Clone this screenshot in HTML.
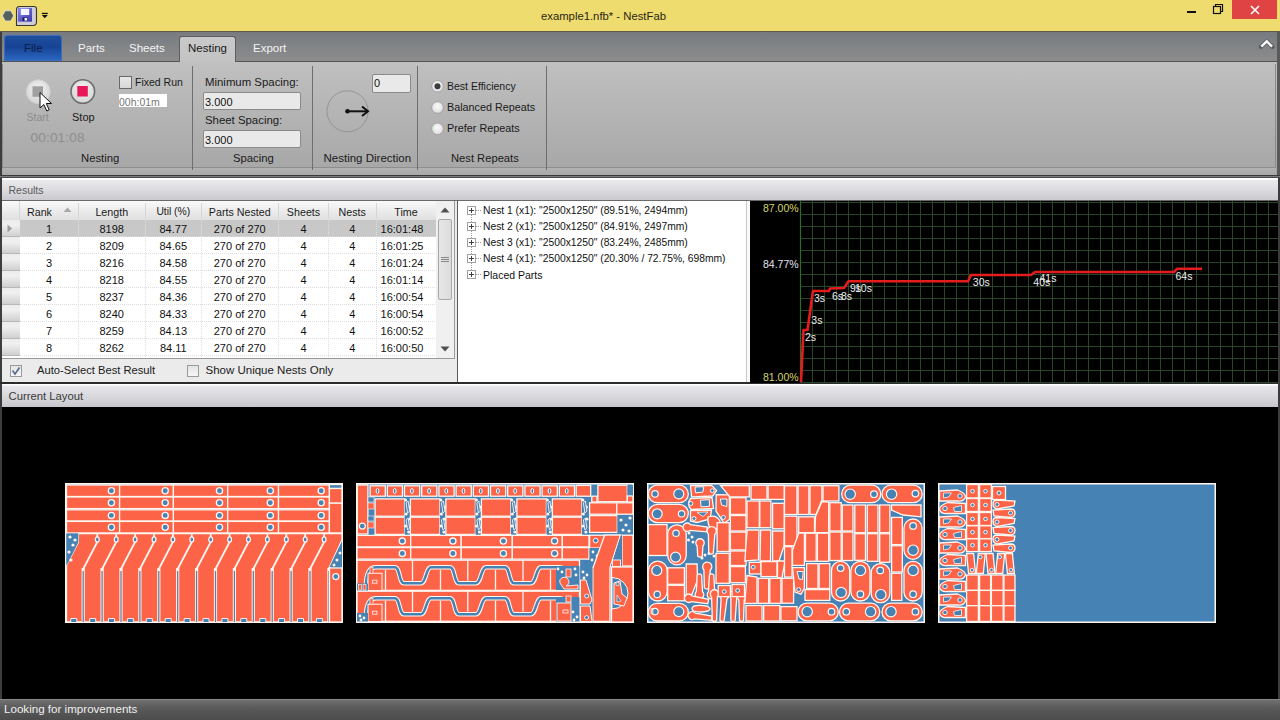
<!DOCTYPE html>
<html><head><meta charset="utf-8">
<style>
*{margin:0;padding:0;box-sizing:border-box}
html,body{width:1280px;height:720px;overflow:hidden;background:#000;font-family:"Liberation Sans",sans-serif;font-size:12px;position:relative}
.a{position:absolute}
.t{position:absolute;white-space:nowrap;line-height:1}
</style></head><body>
<!-- TITLE BAR -->
<div class="a" style="left:0;top:0;width:1280px;height:31px;background:#efdc6e"></div>
<svg class="a" style="left:0;top:0" width="50" height="30" viewBox="0 0 50 30">
  <defs><linearGradient id="fl" x1="0" y1="0" x2="1" y2="1"><stop offset="0" stop-color="#8a86f0"/><stop offset="1" stop-color="#3d3aa8"/></linearGradient></defs>
  <polygon points="2.2,15.8 5.1,10.6 10.9,10.6 13.8,15.8 10.9,21 5.1,21" fill="#56605f" stroke="#ece6c8" stroke-width="1.2" stroke-opacity="0.8"/>
  <path d="M19.5 6.5H34Q36.5 6.5 36.5 9V22Q36.5 25.5 33 25.5H16.5V10Q16.5 6.5 19.5 6.5Z" fill="#cfcdd8" stroke="#3a3630" stroke-width="1.1"/>
  <rect x="18" y="8" width="14" height="13.7" fill="url(#fl)"/>
  <rect x="20.8" y="8.8" width="8.4" height="6.2" fill="#f6f6ff"/>
  <rect x="22.5" y="17.5" width="5" height="3.3" fill="#1a1a50"/>
  <rect x="24.5" y="18" width="2.6" height="2.6" fill="#f0f0ff"/>
  <rect x="41.8" y="12.8" width="6" height="1.3" fill="#111"/>
  <polygon points="41.8,15 47.8,15 44.8,18.2" fill="#111"/>
</svg>
<div class="t" style="left:541px;top:11px;font-size:11.3px;color:#2a2618">example1.nfb* - NestFab</div>
<div class="a" style="left:1187px;top:11px;width:9px;height:2px;background:#111"></div>
<svg class="a" style="left:1212px;top:3px" width="12" height="12" viewBox="0 0 12 12">
  <rect x="1.5" y="3.5" width="7" height="7" fill="none" stroke="#111" stroke-width="1.2"/>
  <path d="M3.5 3V1.5H10.5V8.5H9" fill="none" stroke="#111" stroke-width="1.2"/>
</svg>
<div class="a" style="left:1232px;top:0;width:45px;height:19px;background:#e04343"></div>
<svg class="a" style="left:1250px;top:5px" width="10" height="10" viewBox="0 0 10 10"><path d="M1 1L9 9M9 1L1 9" stroke="#fff" stroke-width="1.6"/></svg>
<div class="a" style="left:0;top:31px;width:1280px;height:1px;background:#5f5a48"></div>

<!-- TAB STRIP -->
<div class="a" style="left:0;top:32px;width:1280px;height:30px;background:linear-gradient(#777b80,#8d8d8d)"></div>
<div class="a" style="left:0;top:32px;width:2px;height:670px;background:#3d3d3d"></div>
<div class="a" style="left:1277px;top:32px;width:3px;height:146px;background:#5a5a5a"></div>
<div class="a" style="left:4px;top:35px;width:58px;height:26px;border-radius:3px 3px 0 0;background:linear-gradient(#1f4f9c,#174395 45%,#2a66bf);border:1px solid #3b6cc0"></div>
<div class="t" style="left:24px;top:43px;font-size:11.5px;color:#0c1e45">File</div>
<div class="t" style="left:78px;top:43px;font-size:11.5px;color:#f4f4f4">Parts</div>
<div class="t" style="left:129px;top:43px;font-size:11.5px;color:#f4f4f4">Sheets</div>
<div class="a" style="left:179px;top:36px;width:57px;height:27px;border-radius:3px 3px 0 0;background:linear-gradient(#c9c9c9,#c3c3c3);border:1px solid #5e5e5e;border-bottom:none"></div>
<div class="t" style="left:188px;top:43px;font-size:11.5px;color:#1a1a1a">Nesting</div>
<div class="t" style="left:253px;top:43px;font-size:11.5px;color:#f4f4f4">Export</div>
<svg class="a" style="left:1259px;top:38px" width="16" height="12" viewBox="0 0 16 12">
  <path d="M2 8.8L7.7 3.2L13.4 8.8" fill="none" stroke="#3a3a3a" stroke-width="4.2" stroke-linejoin="round" stroke-linecap="round" stroke-opacity="0.6"/>
  <path d="M2.3 8.6L7.7 3.4L13.1 8.6" fill="none" stroke="#f4f4f4" stroke-width="2.6" stroke-linejoin="miter"/>
</svg>
<div class="a" style="left:2px;top:61px;width:177px;height:1px;background:#555"></div>
<div class="a" style="left:236px;top:61px;width:1041px;height:1px;background:#555"></div>

<!-- RIBBON BODY -->
<div class="a" style="left:2px;top:62px;width:1275px;height:113px;background:linear-gradient(#c0c0c0,#a6a6a6)"></div>
<div class="a" style="left:3px;top:167px;width:1273px;height:1px;background:#8e8e8e"></div>
<div class="a" style="left:3px;top:168px;width:1273px;height:7px;background:linear-gradient(#b2b2b2,#a8a8a8)"></div>
<div class="a" style="left:2px;top:64px;width:1px;height:104px;background:#8a8a8a"></div>
<div class="a" style="left:1275px;top:64px;width:1px;height:104px;background:#8a8a8a"></div>
<div class="a" style="left:0;top:175px;width:1280px;height:3px;background:linear-gradient(#3a3a3a 0 1px,#7a7a7a 1px 2px,#4a4a4a 2px)"></div>
<div class="a" style="left:192px;top:66px;width:1px;height:104px;background:#6e6e6e"></div>
<div class="a" style="left:312px;top:66px;width:1px;height:104px;background:#6e6e6e"></div>
<div class="a" style="left:417px;top:66px;width:1px;height:104px;background:#6e6e6e"></div>
<div class="a" style="left:546px;top:66px;width:1px;height:104px;background:#6e6e6e"></div>

<svg class="a" style="left:20px;top:74px" width="80" height="40" viewBox="0 0 80 40">
  <defs>
    <radialGradient id="bg1" cx="50%" cy="40%" r="60%"><stop offset="0" stop-color="#f4f4f4"/><stop offset="1" stop-color="#d4d4d4"/></radialGradient>
  </defs>
  <circle cx="18.3" cy="17.7" r="12" fill="url(#bg1)" stroke="#cfcfcf" stroke-width="1"/>
  <rect x="12.5" y="12.3" width="10.5" height="10.5" fill="#a0a0a0"/>
  <circle cx="62.8" cy="17.5" r="11.8" fill="url(#bg1)" stroke="#6e6e6e" stroke-width="1.6"/>
  <rect x="57.3" y="12" width="10.5" height="10.5" fill="#e8175a"/>
  <path d="M20 18.5 L20 34 L23.8 30.5 L26.8 37 L29.2 35.8 L26.3 29.5 L31.5 29.5 Z" fill="#fff" stroke="#111" stroke-width="1"/>
</svg>
<div class="t" style="left:26.5px;top:112px;font-size:10.5px;color:#8c8c8c">Start</div>
<div class="t" style="left:72px;top:112px;font-size:11px;color:#1a1a1a">Stop</div>
<div class="t" style="left:30.5px;top:130.8px;font-size:13.7px;letter-spacing:0.12px;color:#8e8e8e">00:01:08</div>
<div class="a" style="left:119px;top:76px;width:13px;height:13px;border:1px solid #6a6a6a;background:linear-gradient(#e8e8e8,#d6d6d6)"></div>
<div class="t" style="left:135px;top:77px;font-size:10.5px;color:#1a1a1a">Fixed Run</div>
<div class="a" style="left:119px;top:94px;width:48px;height:13px;background:#fff"></div>
<div class="t" style="left:119px;top:97px;font-size:10.5px;color:#777">00h:01m</div>
<div class="t" style="left:81px;top:153px;font-size:11.3px;color:#1a1a1a">Nesting</div>

<div class="t" style="left:205px;top:77px;font-size:11.4px;color:#1a1a1a">Minimum Spacing:</div>
<div class="a" style="left:203px;top:92px;width:98px;height:18px;border:1px solid #8a8a8a;border-radius:2px;background:#e9e9e9"></div>
<div class="t" style="left:205px;top:97px;font-size:11px;color:#111">3.000</div>
<div class="t" style="left:205px;top:115px;font-size:11.4px;color:#1a1a1a">Sheet Spacing:</div>
<div class="a" style="left:203px;top:130px;width:98px;height:18px;border:1px solid #8a8a8a;border-radius:2px;background:#e9e9e9"></div>
<div class="t" style="left:205px;top:135px;font-size:11px;color:#111">3.000</div>
<div class="t" style="left:233px;top:153px;font-size:11.3px;color:#1a1a1a">Spacing</div>

<div class="a" style="left:372px;top:74px;width:39px;height:19px;border:1px solid #8a8a8a;border-radius:2px;background:#e9e9e9"></div>
<div class="t" style="left:374px;top:78px;font-size:11px;color:#111">0</div>
<svg class="a" style="left:325px;top:89px" width="46" height="46" viewBox="0 0 46 46">
  <circle cx="22.5" cy="22.3" r="20.5" fill="none" stroke="#8c8c8c" stroke-width="0.8"/>
  <circle cx="22.5" cy="22.3" r="2.3" fill="#111"/>
  <path d="M22.5 22.3H42" stroke="#111" stroke-width="2"/>
  <path d="M37 17.5L43 22.3L37 27" fill="none" stroke="#111" stroke-width="2"/>
</svg>
<div class="t" style="left:323.5px;top:153px;font-size:11.5px;color:#1a1a1a">Nesting Direction</div>

<svg class="a" style="left:428px;top:77px" width="20" height="60" viewBox="0 0 20 60">
  <defs><radialGradient id="rg" cx="50%" cy="40%" r="60%"><stop offset="0" stop-color="#fafafa"/><stop offset="1" stop-color="#dcdcdc"/></radialGradient></defs>
  <circle cx="9.5" cy="9.3" r="5.8" fill="url(#rg)" stroke="#9a9a9a" stroke-width="0.8"/>
  <circle cx="9.5" cy="9.3" r="3" fill="#3c3c3c"/>
  <circle cx="9.5" cy="30.5" r="5.8" fill="url(#rg)" stroke="#9a9a9a" stroke-width="0.8"/>
  <circle cx="9.5" cy="51.8" r="5.8" fill="url(#rg)" stroke="#9a9a9a" stroke-width="0.8"/>
</svg>
<div class="t" style="left:447px;top:81px;font-size:10.5px;color:#1a1a1a">Best Efficiency</div>
<div class="t" style="left:447px;top:102px;font-size:10.8px;color:#1a1a1a">Balanced Repeats</div>
<div class="t" style="left:447px;top:123px;font-size:10.8px;color:#1a1a1a">Prefer Repeats</div>
<div class="t" style="left:451px;top:153px;font-size:11.2px;color:#1a1a1a">Nest Repeats</div>

<div class="a" style="left:2px;top:178px;width:1277px;height:23px;background:linear-gradient(#fff 0 1px,#eaeaec 1px,#dcdce0 50%,#c9c9cd);border-top:1px solid #fff"></div>
<div class="t" style="left:8.5px;top:185px;font-size:10.5px;color:#5a5a5a">Results</div>
<div class="a" style="left:2px;top:200px;width:1276px;height:1px;background:#6a6a6a"></div>
<div class="a" style="left:2px;top:201px;width:456px;height:181px;background:#ebebeb"></div>
<div class="a" style="left:2px;top:201px;width:453px;height:158px;background:#fff;border-right:1px solid #9a9a9a;border-bottom:1px solid #9a9a9a"></div>
<div class="a" style="left:2px;top:201px;width:434px;height:19px;background:linear-gradient(#fafafa,#ececec 50%,#e0e0e0)"></div>
<div class="a" style="left:77.5px;top:203px;width:1px;height:16px;background:#d6d6d6"></div>
<div class="a" style="left:145.0px;top:203px;width:1px;height:16px;background:#d6d6d6"></div>
<div class="a" style="left:200.5px;top:203px;width:1px;height:16px;background:#d6d6d6"></div>
<div class="a" style="left:278.0px;top:203px;width:1px;height:16px;background:#d6d6d6"></div>
<div class="a" style="left:328.0px;top:203px;width:1px;height:16px;background:#d6d6d6"></div>
<div class="a" style="left:375.5px;top:203px;width:1px;height:16px;background:#d6d6d6"></div>
<div class="a" style="left:19px;top:201px;width:1px;height:19px;background:#d6d6d6"></div>
<div class="t" style="left:27px;top:206.5px;font-size:10.7px;color:#1a1a1a">Rank</div>
<div class="t" style="left:78px;top:206.5px;width:67.5px;text-align:center;font-size:10.7px;color:#1a1a1a">Length</div>
<div class="t" style="left:145.5px;top:206.5px;width:55.5px;text-align:center;font-size:10.3px;color:#1a1a1a">Util (%)</div>
<div class="t" style="left:201px;top:206.5px;width:77.5px;text-align:center;font-size:10.7px;color:#1a1a1a">Parts Nested</div>
<div class="t" style="left:278.5px;top:206.5px;width:50.0px;text-align:center;font-size:10.7px;color:#1a1a1a">Sheets</div>
<div class="t" style="left:328.5px;top:206.5px;width:47.5px;text-align:center;font-size:10.7px;color:#1a1a1a">Nests</div>
<div class="t" style="left:376px;top:206.5px;width:60px;text-align:center;font-size:10.7px;color:#1a1a1a">Time</div>
<svg class="a" style="left:63px;top:207px" width="9" height="6"><polygon points="0.5,5 4.5,0.5 8.5,5" fill="#a8a8a8"/></svg>
<div class="a" style="left:2px;top:220px;width:18px;height:17px;background:linear-gradient(#ececec,#f0f0f0 30%,#d0d0d0);border-bottom:1px solid #b8b8b8"></div>
<div class="a" style="left:20px;top:220px;width:416px;height:17px;background:#c8c8c8"></div>
<svg class="a" style="left:7px;top:224px" width="6" height="9"><polygon points="0.5,0.5 5,4.5 0.5,8.5" fill="#9c9c9c"/></svg>
<div class="a" style="left:20px;top:236px;width:416px;height:1px;background:repeating-linear-gradient(90deg,#dedede 0 1px,transparent 1px 2px)"></div>
<div class="t" style="left:20px;top:224px;width:58px;text-align:center;font-size:11px;color:#111">1</div>
<div class="t" style="left:78px;top:224px;width:67.5px;text-align:center;font-size:11px;color:#111">8198</div>
<div class="t" style="left:145.5px;top:224px;width:55.5px;text-align:center;font-size:11px;color:#111">84.77</div>
<div class="t" style="left:201px;top:224px;width:77.5px;text-align:center;font-size:11px;color:#111">270 of 270</div>
<div class="t" style="left:278.5px;top:224px;width:50.0px;text-align:center;font-size:11px;color:#111">4</div>
<div class="t" style="left:328.5px;top:224px;width:47.5px;text-align:center;font-size:11px;color:#111">4</div>
<div class="t" style="left:376px;top:224px;width:52px;text-align:center;font-size:11px;color:#111">16:01:48</div>
<div class="a" style="left:2px;top:237px;width:18px;height:17px;background:linear-gradient(#ececec,#f0f0f0 30%,#d0d0d0);border-bottom:1px solid #b8b8b8"></div>
<div class="a" style="left:20px;top:253px;width:416px;height:1px;background:repeating-linear-gradient(90deg,#dedede 0 1px,transparent 1px 2px)"></div>
<div class="t" style="left:20px;top:241px;width:58px;text-align:center;font-size:11px;color:#111">2</div>
<div class="t" style="left:78px;top:241px;width:67.5px;text-align:center;font-size:11px;color:#111">8209</div>
<div class="t" style="left:145.5px;top:241px;width:55.5px;text-align:center;font-size:11px;color:#111">84.65</div>
<div class="t" style="left:201px;top:241px;width:77.5px;text-align:center;font-size:11px;color:#111">270 of 270</div>
<div class="t" style="left:278.5px;top:241px;width:50.0px;text-align:center;font-size:11px;color:#111">4</div>
<div class="t" style="left:328.5px;top:241px;width:47.5px;text-align:center;font-size:11px;color:#111">4</div>
<div class="t" style="left:376px;top:241px;width:52px;text-align:center;font-size:11px;color:#111">16:01:25</div>
<div class="a" style="left:2px;top:254px;width:18px;height:17px;background:linear-gradient(#ececec,#f0f0f0 30%,#d0d0d0);border-bottom:1px solid #b8b8b8"></div>
<div class="a" style="left:20px;top:270px;width:416px;height:1px;background:repeating-linear-gradient(90deg,#dedede 0 1px,transparent 1px 2px)"></div>
<div class="t" style="left:20px;top:258px;width:58px;text-align:center;font-size:11px;color:#111">3</div>
<div class="t" style="left:78px;top:258px;width:67.5px;text-align:center;font-size:11px;color:#111">8216</div>
<div class="t" style="left:145.5px;top:258px;width:55.5px;text-align:center;font-size:11px;color:#111">84.58</div>
<div class="t" style="left:201px;top:258px;width:77.5px;text-align:center;font-size:11px;color:#111">270 of 270</div>
<div class="t" style="left:278.5px;top:258px;width:50.0px;text-align:center;font-size:11px;color:#111">4</div>
<div class="t" style="left:328.5px;top:258px;width:47.5px;text-align:center;font-size:11px;color:#111">4</div>
<div class="t" style="left:376px;top:258px;width:52px;text-align:center;font-size:11px;color:#111">16:01:24</div>
<div class="a" style="left:2px;top:271px;width:18px;height:17px;background:linear-gradient(#ececec,#f0f0f0 30%,#d0d0d0);border-bottom:1px solid #b8b8b8"></div>
<div class="a" style="left:20px;top:287px;width:416px;height:1px;background:repeating-linear-gradient(90deg,#dedede 0 1px,transparent 1px 2px)"></div>
<div class="t" style="left:20px;top:275px;width:58px;text-align:center;font-size:11px;color:#111">4</div>
<div class="t" style="left:78px;top:275px;width:67.5px;text-align:center;font-size:11px;color:#111">8218</div>
<div class="t" style="left:145.5px;top:275px;width:55.5px;text-align:center;font-size:11px;color:#111">84.55</div>
<div class="t" style="left:201px;top:275px;width:77.5px;text-align:center;font-size:11px;color:#111">270 of 270</div>
<div class="t" style="left:278.5px;top:275px;width:50.0px;text-align:center;font-size:11px;color:#111">4</div>
<div class="t" style="left:328.5px;top:275px;width:47.5px;text-align:center;font-size:11px;color:#111">4</div>
<div class="t" style="left:376px;top:275px;width:52px;text-align:center;font-size:11px;color:#111">16:01:14</div>
<div class="a" style="left:2px;top:288px;width:18px;height:17px;background:linear-gradient(#ececec,#f0f0f0 30%,#d0d0d0);border-bottom:1px solid #b8b8b8"></div>
<div class="a" style="left:20px;top:304px;width:416px;height:1px;background:repeating-linear-gradient(90deg,#dedede 0 1px,transparent 1px 2px)"></div>
<div class="t" style="left:20px;top:292px;width:58px;text-align:center;font-size:11px;color:#111">5</div>
<div class="t" style="left:78px;top:292px;width:67.5px;text-align:center;font-size:11px;color:#111">8237</div>
<div class="t" style="left:145.5px;top:292px;width:55.5px;text-align:center;font-size:11px;color:#111">84.36</div>
<div class="t" style="left:201px;top:292px;width:77.5px;text-align:center;font-size:11px;color:#111">270 of 270</div>
<div class="t" style="left:278.5px;top:292px;width:50.0px;text-align:center;font-size:11px;color:#111">4</div>
<div class="t" style="left:328.5px;top:292px;width:47.5px;text-align:center;font-size:11px;color:#111">4</div>
<div class="t" style="left:376px;top:292px;width:52px;text-align:center;font-size:11px;color:#111">16:00:54</div>
<div class="a" style="left:2px;top:305px;width:18px;height:17px;background:linear-gradient(#ececec,#f0f0f0 30%,#d0d0d0);border-bottom:1px solid #b8b8b8"></div>
<div class="a" style="left:20px;top:321px;width:416px;height:1px;background:repeating-linear-gradient(90deg,#dedede 0 1px,transparent 1px 2px)"></div>
<div class="t" style="left:20px;top:309px;width:58px;text-align:center;font-size:11px;color:#111">6</div>
<div class="t" style="left:78px;top:309px;width:67.5px;text-align:center;font-size:11px;color:#111">8240</div>
<div class="t" style="left:145.5px;top:309px;width:55.5px;text-align:center;font-size:11px;color:#111">84.33</div>
<div class="t" style="left:201px;top:309px;width:77.5px;text-align:center;font-size:11px;color:#111">270 of 270</div>
<div class="t" style="left:278.5px;top:309px;width:50.0px;text-align:center;font-size:11px;color:#111">4</div>
<div class="t" style="left:328.5px;top:309px;width:47.5px;text-align:center;font-size:11px;color:#111">4</div>
<div class="t" style="left:376px;top:309px;width:52px;text-align:center;font-size:11px;color:#111">16:00:54</div>
<div class="a" style="left:2px;top:322px;width:18px;height:17px;background:linear-gradient(#ececec,#f0f0f0 30%,#d0d0d0);border-bottom:1px solid #b8b8b8"></div>
<div class="a" style="left:20px;top:338px;width:416px;height:1px;background:repeating-linear-gradient(90deg,#dedede 0 1px,transparent 1px 2px)"></div>
<div class="t" style="left:20px;top:326px;width:58px;text-align:center;font-size:11px;color:#111">7</div>
<div class="t" style="left:78px;top:326px;width:67.5px;text-align:center;font-size:11px;color:#111">8259</div>
<div class="t" style="left:145.5px;top:326px;width:55.5px;text-align:center;font-size:11px;color:#111">84.13</div>
<div class="t" style="left:201px;top:326px;width:77.5px;text-align:center;font-size:11px;color:#111">270 of 270</div>
<div class="t" style="left:278.5px;top:326px;width:50.0px;text-align:center;font-size:11px;color:#111">4</div>
<div class="t" style="left:328.5px;top:326px;width:47.5px;text-align:center;font-size:11px;color:#111">4</div>
<div class="t" style="left:376px;top:326px;width:52px;text-align:center;font-size:11px;color:#111">16:00:52</div>
<div class="a" style="left:2px;top:339px;width:18px;height:17px;background:linear-gradient(#ececec,#f0f0f0 30%,#d0d0d0);border-bottom:1px solid #b8b8b8"></div>
<div class="a" style="left:20px;top:355px;width:416px;height:1px;background:repeating-linear-gradient(90deg,#dedede 0 1px,transparent 1px 2px)"></div>
<div class="t" style="left:20px;top:343px;width:58px;text-align:center;font-size:11px;color:#111">8</div>
<div class="t" style="left:78px;top:343px;width:67.5px;text-align:center;font-size:11px;color:#111">8262</div>
<div class="t" style="left:145.5px;top:343px;width:55.5px;text-align:center;font-size:11px;color:#111">84.11</div>
<div class="t" style="left:201px;top:343px;width:77.5px;text-align:center;font-size:11px;color:#111">270 of 270</div>
<div class="t" style="left:278.5px;top:343px;width:50.0px;text-align:center;font-size:11px;color:#111">4</div>
<div class="t" style="left:328.5px;top:343px;width:47.5px;text-align:center;font-size:11px;color:#111">4</div>
<div class="t" style="left:376px;top:343px;width:52px;text-align:center;font-size:11px;color:#111">16:00:50</div>
<div class="a" style="left:77.5px;top:220px;width:1px;height:138px;background:repeating-linear-gradient(#dedede 0 1px,transparent 1px 2px)"></div>
<div class="a" style="left:145.0px;top:220px;width:1px;height:138px;background:repeating-linear-gradient(#dedede 0 1px,transparent 1px 2px)"></div>
<div class="a" style="left:200.5px;top:220px;width:1px;height:138px;background:repeating-linear-gradient(#dedede 0 1px,transparent 1px 2px)"></div>
<div class="a" style="left:278.0px;top:220px;width:1px;height:138px;background:repeating-linear-gradient(#dedede 0 1px,transparent 1px 2px)"></div>
<div class="a" style="left:328.0px;top:220px;width:1px;height:138px;background:repeating-linear-gradient(#dedede 0 1px,transparent 1px 2px)"></div>
<div class="a" style="left:375.5px;top:220px;width:1px;height:138px;background:repeating-linear-gradient(#dedede 0 1px,transparent 1px 2px)"></div>
<div class="a" style="left:436px;top:201px;width:18px;height:157px;background:#f0f0f0"></div>
<svg class="a" style="left:440px;top:207px" width="10" height="6"><polygon points="0.5,5.5 5,0.5 9.5,5.5" fill="#505050"/></svg>
<svg class="a" style="left:440px;top:346px" width="10" height="6"><polygon points="0.5,0.5 5,5.5 9.5,0.5" fill="#505050"/></svg>
<div class="a" style="left:438px;top:219px;width:14px;height:81px;border:1px solid #a8a8a8;border-radius:2px;background:linear-gradient(90deg,#e6e6e6,#dcdcdc)"></div>
<div class="a" style="left:441px;top:257px;width:8px;height:5px;background:repeating-linear-gradient(#888 0 1px,transparent 1px 2px)"></div>
<div class="a" style="left:9.5px;top:364.5px;width:12px;height:12px;border:1px solid #9a9a9a;background:linear-gradient(#e4e4e4,#f6f6f6)"></div>
<svg class="a" style="left:11px;top:366px" width="10" height="10"><path d="M1.5 4.5L4 8L8.5 1.5" fill="none" stroke="#5a6a8a" stroke-width="1.6"/></svg>
<div class="t" style="left:37px;top:365px;font-size:11.2px;color:#1a1a1a">Auto-Select Best Result</div>
<div class="a" style="left:186.5px;top:364.5px;width:12px;height:12px;border:1px solid #9a9a9a;background:linear-gradient(#e4e4e4,#f6f6f6)"></div>
<div class="t" style="left:205.5px;top:365px;font-size:11.5px;color:#1a1a1a">Show Unique Nests Only</div>
<div class="a" style="left:457px;top:201px;width:292px;height:181px;background:#fff;border-left:1px solid #5a5a5a"></div>
<div class="a" style="left:471px;top:215px;width:1px;height:56px;background:repeating-linear-gradient(#a0a0a0 0 1px,transparent 1px 2px)"></div>
<div class="a" style="left:466.5px;top:206.0px;width:9px;height:9px;border:1px solid #a0a0a0;background:#fff"></div>
<div class="a" style="left:468.5px;top:210.0px;width:5px;height:1px;background:#404040"></div>
<div class="a" style="left:470.5px;top:208.0px;width:1px;height:5px;background:#404040"></div>
<div class="a" style="left:476px;top:210.0px;width:5px;height:1px;background:repeating-linear-gradient(90deg,#a0a0a0 0 1px,transparent 1px 2px)"></div>
<div class="t" style="left:483px;top:206.0px;font-size:10.3px;color:#111">Nest 1 (x1): &quot;2500x1250&quot; (89.51%, 2494mm)</div>
<div class="a" style="left:466.5px;top:222.0px;width:9px;height:9px;border:1px solid #a0a0a0;background:#fff"></div>
<div class="a" style="left:468.5px;top:226.0px;width:5px;height:1px;background:#404040"></div>
<div class="a" style="left:470.5px;top:224.0px;width:1px;height:5px;background:#404040"></div>
<div class="a" style="left:476px;top:226.0px;width:5px;height:1px;background:repeating-linear-gradient(90deg,#a0a0a0 0 1px,transparent 1px 2px)"></div>
<div class="t" style="left:483px;top:222.0px;font-size:10.3px;color:#111">Nest 2 (x1): &quot;2500x1250&quot; (84.91%, 2497mm)</div>
<div class="a" style="left:466.5px;top:238.0px;width:9px;height:9px;border:1px solid #a0a0a0;background:#fff"></div>
<div class="a" style="left:468.5px;top:242.0px;width:5px;height:1px;background:#404040"></div>
<div class="a" style="left:470.5px;top:240.0px;width:1px;height:5px;background:#404040"></div>
<div class="a" style="left:476px;top:242.0px;width:5px;height:1px;background:repeating-linear-gradient(90deg,#a0a0a0 0 1px,transparent 1px 2px)"></div>
<div class="t" style="left:483px;top:238.0px;font-size:10.3px;color:#111">Nest 3 (x1): &quot;2500x1250&quot; (83.24%, 2485mm)</div>
<div class="a" style="left:466.5px;top:254.0px;width:9px;height:9px;border:1px solid #a0a0a0;background:#fff"></div>
<div class="a" style="left:468.5px;top:258.0px;width:5px;height:1px;background:#404040"></div>
<div class="a" style="left:470.5px;top:256.0px;width:1px;height:5px;background:#404040"></div>
<div class="a" style="left:476px;top:258.0px;width:5px;height:1px;background:repeating-linear-gradient(90deg,#a0a0a0 0 1px,transparent 1px 2px)"></div>
<div class="t" style="left:483px;top:254.0px;font-size:10.3px;color:#111">Nest 4 (x1): &quot;2500x1250&quot; (20.30% / 72.75%, 698mm)</div>
<div class="a" style="left:466.5px;top:270.0px;width:9px;height:9px;border:1px solid #a0a0a0;background:#fff"></div>
<div class="a" style="left:468.5px;top:274.0px;width:5px;height:1px;background:#404040"></div>
<div class="a" style="left:470.5px;top:272.0px;width:1px;height:5px;background:#404040"></div>
<div class="a" style="left:476px;top:274.0px;width:5px;height:1px;background:repeating-linear-gradient(90deg,#a0a0a0 0 1px,transparent 1px 2px)"></div>
<div class="t" style="left:483px;top:270.0px;font-size:10.5px;color:#111">Placed Parts</div>
<div class="a" style="left:0;top:382px;width:1280px;height:2px;background:#2c2c2c"></div>
<div class="a" style="left:2px;top:384px;width:1276px;height:23px;background:linear-gradient(#fff 0 1px,#e8e8ec 2px,#dadade 50%,#c8c8cc)"></div>
<div class="t" style="left:8.5px;top:390.5px;font-size:11.3px;color:#3a3a3a">Current Layout</div>
<div class="a" style="left:1278px;top:178px;width:2px;height:521px;background:#3c3c3c"></div>
<div class="a" style="left:0;top:699px;width:1280px;height:21px;background:linear-gradient(#707070,#5a5a5a 40%,#4c4c4c);border-top:1px solid #888"></div>
<div class="t" style="left:4px;top:703px;font-size:11.6px;color:#f0f0f0">Looking for improvements</div>
<div class="a" style="left:746px;top:201px;width:1px;height:181px;background:#c8c8c8"></div>
<div class="a" style="left:747px;top:201px;width:3px;height:181px;background:#fafafa"></div>
<svg class="a" style="left:750px;top:201px" width="528" height="182" viewBox="750 201 528 182"><rect x="750" y="201" width="530" height="182" fill="#000"/><path d="M800 202.5H1280 M800 214.5H1280 M800 226.5H1280 M800 238.5H1280 M800 250.5H1280 M800 262.5H1280 M800 274.5H1280 M800 286.5H1280 M800 298.5H1280 M800 310.5H1280 M800 322.5H1280 M800 334.5H1280 M800 346.5H1280 M800 358.5H1280 M800 370.5H1280 M800 382.5H1280 M800.5 201V382 M812.5 201V382 M824.5 201V382 M836.5 201V382 M848.5 201V382 M860.5 201V382 M872.5 201V382 M884.5 201V382 M896.5 201V382 M908.5 201V382 M920.5 201V382 M932.5 201V382 M944.5 201V382 M956.5 201V382 M968.5 201V382 M980.5 201V382 M992.5 201V382 M1004.5 201V382 M1016.5 201V382 M1028.5 201V382 M1040.5 201V382 M1052.5 201V382 M1064.5 201V382 M1076.5 201V382 M1088.5 201V382 M1100.5 201V382 M1112.5 201V382 M1124.5 201V382 M1136.5 201V382 M1148.5 201V382 M1160.5 201V382 M1172.5 201V382 M1184.5 201V382 M1196.5 201V382 M1208.5 201V382 M1220.5 201V382 M1232.5 201V382 M1244.5 201V382 M1256.5 201V382 M1268.5 201V382" stroke="#294529" stroke-width="1" fill="none"/><path d="M800.5 201V382" stroke="#2c6a2c" stroke-width="1.2"/><path d="M801 382 L803.5 330 L807.5 330 L813 291 L829 291 L830 288.5 L844 288 L848.5 281.3 L968 281.3 L971 275 L1031 275 L1035 272 L1174 272 L1177 268.8 L1202 268.8" stroke="#e41c1c" stroke-width="2.6" fill="none" stroke-linejoin="round"/><text x="805" y="340.8" font-family="Liberation Sans" font-size="10.5" fill="#ececec">2s</text><text x="811.3" y="323.7" font-family="Liberation Sans" font-size="10.5" fill="#ececec">3s</text><text x="814" y="301.7" font-family="Liberation Sans" font-size="10.5" fill="#ececec">3s</text><text x="832" y="299.7" font-family="Liberation Sans" font-size="10.5" fill="#ececec">6s</text><text x="841" y="299.5" font-family="Liberation Sans" font-size="10.5" fill="#ececec">8s</text><text x="850" y="292" font-family="Liberation Sans" font-size="10.5" fill="#ececec">9s</text><text x="855" y="292" font-family="Liberation Sans" font-size="10.5" fill="#ececec">10s</text><text x="972.8" y="285.6" font-family="Liberation Sans" font-size="10.5" fill="#ececec">30s</text><text x="1033.3" y="285.6" font-family="Liberation Sans" font-size="10.5" fill="#ececec">40s</text><text x="1039.5" y="282.2" font-family="Liberation Sans" font-size="10.5" fill="#ececec">41s</text><text x="1175.5" y="279.5" font-family="Liberation Sans" font-size="10.5" fill="#ececec">64s</text><text x="798.6" y="212" text-anchor="end" font-family="Liberation Sans" font-size="10.5" fill="#d6d46a">87.00%</text><text x="798.6" y="268" text-anchor="end" font-family="Liberation Sans" font-size="10.5" fill="#e4e4f0">84.77%</text><text x="798.6" y="381" text-anchor="end" font-family="Liberation Sans" font-size="10.5" fill="#d6d46a">81.00%</text></svg>
<svg class="a" style="left:0;top:407px" width="1280" height="292" viewBox="0 407 1280 292"><rect x="65.75" y="483.75" width="276.5" height="138.5" fill="#4682b4" stroke="#fff6f0" stroke-width="1.5"/><rect x="66.5" y="485.0" width="53.1" height="11.5" rx="0" fill="#fd6347" stroke="#fff6f0" stroke-width="1.3"/><circle cx="111.4" cy="490.8" r="3.1" fill="#4682b4" stroke="#fff6f0" stroke-width="1.3"/><rect x="119.6" y="485.0" width="53.8" height="11.5" rx="0" fill="#fd6347" stroke="#fff6f0" stroke-width="1.3"/><circle cx="165.2" cy="490.8" r="3.1" fill="#4682b4" stroke="#fff6f0" stroke-width="1.3"/><rect x="173.4" y="485.0" width="54.3" height="11.5" rx="0" fill="#fd6347" stroke="#fff6f0" stroke-width="1.3"/><circle cx="219.5" cy="490.8" r="3.1" fill="#4682b4" stroke="#fff6f0" stroke-width="1.3"/><rect x="227.7" y="485.0" width="50.8" height="11.5" rx="0" fill="#fd6347" stroke="#fff6f0" stroke-width="1.3"/><circle cx="270.3" cy="490.8" r="3.1" fill="#4682b4" stroke="#fff6f0" stroke-width="1.3"/><rect x="278.5" y="485.0" width="50.9" height="11.5" rx="0" fill="#fd6347" stroke="#fff6f0" stroke-width="1.3"/><circle cx="321.2" cy="490.8" r="3.1" fill="#4682b4" stroke="#fff6f0" stroke-width="1.3"/><rect x="66.5" y="497.0" width="53.1" height="11.6" rx="0" fill="#fd6347" stroke="#fff6f0" stroke-width="1.3"/><circle cx="111.4" cy="502.8" r="3.1" fill="#4682b4" stroke="#fff6f0" stroke-width="1.3"/><rect x="119.6" y="497.0" width="53.8" height="11.6" rx="0" fill="#fd6347" stroke="#fff6f0" stroke-width="1.3"/><circle cx="165.2" cy="502.8" r="3.1" fill="#4682b4" stroke="#fff6f0" stroke-width="1.3"/><rect x="173.4" y="497.0" width="54.3" height="11.6" rx="0" fill="#fd6347" stroke="#fff6f0" stroke-width="1.3"/><circle cx="219.5" cy="502.8" r="3.1" fill="#4682b4" stroke="#fff6f0" stroke-width="1.3"/><rect x="227.7" y="497.0" width="50.8" height="11.6" rx="0" fill="#fd6347" stroke="#fff6f0" stroke-width="1.3"/><circle cx="270.3" cy="502.8" r="3.1" fill="#4682b4" stroke="#fff6f0" stroke-width="1.3"/><rect x="278.5" y="497.0" width="50.9" height="11.6" rx="0" fill="#fd6347" stroke="#fff6f0" stroke-width="1.3"/><circle cx="321.2" cy="502.8" r="3.1" fill="#4682b4" stroke="#fff6f0" stroke-width="1.3"/><rect x="66.5" y="509.8" width="53.1" height="11.2" rx="0" fill="#fd6347" stroke="#fff6f0" stroke-width="1.3"/><circle cx="111.4" cy="515.4" r="3.1" fill="#4682b4" stroke="#fff6f0" stroke-width="1.3"/><rect x="119.6" y="509.8" width="53.8" height="11.2" rx="0" fill="#fd6347" stroke="#fff6f0" stroke-width="1.3"/><circle cx="165.2" cy="515.4" r="3.1" fill="#4682b4" stroke="#fff6f0" stroke-width="1.3"/><rect x="173.4" y="509.8" width="54.3" height="11.2" rx="0" fill="#fd6347" stroke="#fff6f0" stroke-width="1.3"/><circle cx="219.5" cy="515.4" r="3.1" fill="#4682b4" stroke="#fff6f0" stroke-width="1.3"/><rect x="227.7" y="509.8" width="50.8" height="11.2" rx="0" fill="#fd6347" stroke="#fff6f0" stroke-width="1.3"/><circle cx="270.3" cy="515.4" r="3.1" fill="#4682b4" stroke="#fff6f0" stroke-width="1.3"/><rect x="278.5" y="509.8" width="50.9" height="11.2" rx="0" fill="#fd6347" stroke="#fff6f0" stroke-width="1.3"/><circle cx="321.2" cy="515.4" r="3.1" fill="#4682b4" stroke="#fff6f0" stroke-width="1.3"/><rect x="66.5" y="521.4" width="53.1" height="11.6" rx="0" fill="#fd6347" stroke="#fff6f0" stroke-width="1.3"/><circle cx="111.4" cy="527.2" r="3.1" fill="#4682b4" stroke="#fff6f0" stroke-width="1.3"/><rect x="119.6" y="521.4" width="53.8" height="11.6" rx="0" fill="#fd6347" stroke="#fff6f0" stroke-width="1.3"/><circle cx="165.2" cy="527.2" r="3.1" fill="#4682b4" stroke="#fff6f0" stroke-width="1.3"/><rect x="173.4" y="521.4" width="54.3" height="11.6" rx="0" fill="#fd6347" stroke="#fff6f0" stroke-width="1.3"/><circle cx="219.5" cy="527.2" r="3.1" fill="#4682b4" stroke="#fff6f0" stroke-width="1.3"/><rect x="227.7" y="521.4" width="50.8" height="11.6" rx="0" fill="#fd6347" stroke="#fff6f0" stroke-width="1.3"/><circle cx="270.3" cy="527.2" r="3.1" fill="#4682b4" stroke="#fff6f0" stroke-width="1.3"/><rect x="278.5" y="521.4" width="50.9" height="11.6" rx="0" fill="#fd6347" stroke="#fff6f0" stroke-width="1.3"/><circle cx="321.2" cy="527.2" r="3.1" fill="#4682b4" stroke="#fff6f0" stroke-width="1.3"/><rect x="329.4" y="484.5" width="12.6" height="4.0" rx="0" fill="#4682b4" stroke="#fff6f0" stroke-width="1.3"/><rect x="329.4" y="488.5" width="12.6" height="14.7" rx="0" fill="#fd6347" stroke="#fff6f0" stroke-width="1.3"/><rect x="329.4" y="503.2" width="12.6" height="29.8" rx="0" fill="#fd6347" stroke="#fff6f0" stroke-width="1.3"/><polygon points="78.4,533.5 342.0,533.5 342.0,540.0 329.0,569.0 329.0,622.0 66.5,622.0 66.5,565.5 78.4,542.0" fill="#fd6347" stroke="#fff6f0" stroke-width="1.3"/><polygon points="66.5,533.5 78.4,533.5 78.4,542.0 66.5,566.0" fill="#4682b4" stroke="#fff6f0" stroke-width="0"/><circle cx="70.0" cy="537.0" r="1.6" fill="#fff6f0" stroke="#fff6f0" stroke-width="0"/><circle cx="73.0" cy="545.0" r="1.6" fill="#fff6f0" stroke="#fff6f0" stroke-width="0"/><circle cx="69.0" cy="552.0" r="1.6" fill="#fff6f0" stroke="#fff6f0" stroke-width="0"/><circle cx="75.0" cy="540.0" r="1.6" fill="#fff6f0" stroke="#fff6f0" stroke-width="0"/><circle cx="71.0" cy="560.0" r="1.6" fill="#fff6f0" stroke="#fff6f0" stroke-width="0"/><path d="M97.3 533.5V542L83.2 569" fill="none" stroke="#fff6f0" stroke-width="1.8"/><path d="M83.2 568V622" fill="none" stroke="#fff6f0" stroke-width="3.2"/><path d="M83.2 571V622" fill="none" stroke="#647c9c" stroke-width="1.3"/><ellipse cx="97.3" cy="539.5" rx="1.9" ry="2.6" fill="#4682b4" stroke="#fff6f0" stroke-width="1.2"/><path d="M116.2 533.5V542L102.1 569" fill="none" stroke="#fff6f0" stroke-width="1.8"/><path d="M102.1 568V622" fill="none" stroke="#fff6f0" stroke-width="3.2"/><path d="M102.1 571V622" fill="none" stroke="#647c9c" stroke-width="1.3"/><ellipse cx="116.2" cy="539.5" rx="1.9" ry="2.6" fill="#4682b4" stroke="#fff6f0" stroke-width="1.2"/><path d="M135.1 533.5V542L121.0 569" fill="none" stroke="#fff6f0" stroke-width="1.8"/><path d="M121.0 568V622" fill="none" stroke="#fff6f0" stroke-width="3.2"/><path d="M121.0 571V622" fill="none" stroke="#647c9c" stroke-width="1.3"/><ellipse cx="135.1" cy="539.5" rx="1.9" ry="2.6" fill="#4682b4" stroke="#fff6f0" stroke-width="1.2"/><path d="M154.0 533.5V542L139.9 569" fill="none" stroke="#fff6f0" stroke-width="1.8"/><path d="M139.9 568V622" fill="none" stroke="#fff6f0" stroke-width="3.2"/><path d="M139.9 571V622" fill="none" stroke="#647c9c" stroke-width="1.3"/><ellipse cx="154.0" cy="539.5" rx="1.9" ry="2.6" fill="#4682b4" stroke="#fff6f0" stroke-width="1.2"/><path d="M172.9 533.5V542L158.8 569" fill="none" stroke="#fff6f0" stroke-width="1.8"/><path d="M158.8 568V622" fill="none" stroke="#fff6f0" stroke-width="3.2"/><path d="M158.8 571V622" fill="none" stroke="#647c9c" stroke-width="1.3"/><ellipse cx="172.9" cy="539.5" rx="1.9" ry="2.6" fill="#4682b4" stroke="#fff6f0" stroke-width="1.2"/><path d="M191.8 533.5V542L177.7 569" fill="none" stroke="#fff6f0" stroke-width="1.8"/><path d="M177.7 568V622" fill="none" stroke="#fff6f0" stroke-width="3.2"/><path d="M177.7 571V622" fill="none" stroke="#647c9c" stroke-width="1.3"/><ellipse cx="191.8" cy="539.5" rx="1.9" ry="2.6" fill="#4682b4" stroke="#fff6f0" stroke-width="1.2"/><path d="M210.7 533.5V542L196.6 569" fill="none" stroke="#fff6f0" stroke-width="1.8"/><path d="M196.6 568V622" fill="none" stroke="#fff6f0" stroke-width="3.2"/><path d="M196.6 571V622" fill="none" stroke="#647c9c" stroke-width="1.3"/><ellipse cx="210.7" cy="539.5" rx="1.9" ry="2.6" fill="#4682b4" stroke="#fff6f0" stroke-width="1.2"/><path d="M229.6 533.5V542L215.5 569" fill="none" stroke="#fff6f0" stroke-width="1.8"/><path d="M215.5 568V622" fill="none" stroke="#fff6f0" stroke-width="3.2"/><path d="M215.5 571V622" fill="none" stroke="#647c9c" stroke-width="1.3"/><ellipse cx="229.6" cy="539.5" rx="1.9" ry="2.6" fill="#4682b4" stroke="#fff6f0" stroke-width="1.2"/><path d="M248.5 533.5V542L234.4 569" fill="none" stroke="#fff6f0" stroke-width="1.8"/><path d="M234.4 568V622" fill="none" stroke="#fff6f0" stroke-width="3.2"/><path d="M234.4 571V622" fill="none" stroke="#647c9c" stroke-width="1.3"/><ellipse cx="248.5" cy="539.5" rx="1.9" ry="2.6" fill="#4682b4" stroke="#fff6f0" stroke-width="1.2"/><path d="M267.4 533.5V542L253.3 569" fill="none" stroke="#fff6f0" stroke-width="1.8"/><path d="M253.3 568V622" fill="none" stroke="#fff6f0" stroke-width="3.2"/><path d="M253.3 571V622" fill="none" stroke="#647c9c" stroke-width="1.3"/><ellipse cx="267.4" cy="539.5" rx="1.9" ry="2.6" fill="#4682b4" stroke="#fff6f0" stroke-width="1.2"/><path d="M286.3 533.5V542L272.2 569" fill="none" stroke="#fff6f0" stroke-width="1.8"/><path d="M272.2 568V622" fill="none" stroke="#fff6f0" stroke-width="3.2"/><path d="M272.2 571V622" fill="none" stroke="#647c9c" stroke-width="1.3"/><ellipse cx="286.3" cy="539.5" rx="1.9" ry="2.6" fill="#4682b4" stroke="#fff6f0" stroke-width="1.2"/><path d="M305.2 533.5V542L291.1 569" fill="none" stroke="#fff6f0" stroke-width="1.8"/><path d="M291.1 568V622" fill="none" stroke="#fff6f0" stroke-width="3.2"/><path d="M291.1 571V622" fill="none" stroke="#647c9c" stroke-width="1.3"/><ellipse cx="305.2" cy="539.5" rx="1.9" ry="2.6" fill="#4682b4" stroke="#fff6f0" stroke-width="1.2"/><path d="M324.1 533.5V542L310.0 569" fill="none" stroke="#fff6f0" stroke-width="1.8"/><path d="M310.0 568V622" fill="none" stroke="#fff6f0" stroke-width="3.2"/><path d="M310.0 571V622" fill="none" stroke="#647c9c" stroke-width="1.3"/><ellipse cx="324.1" cy="539.5" rx="1.9" ry="2.6" fill="#4682b4" stroke="#fff6f0" stroke-width="1.2"/><path d="M342 541L328.9 569" fill="none" stroke="#fff6f0" stroke-width="1.8"/><path d="M328.9 568V622" fill="none" stroke="#fff6f0" stroke-width="3.2"/><path d="M328.9 571V622" fill="none" stroke="#647c9c" stroke-width="1.3"/><path d="M70.8 622V618.5H76.8V622" fill="#4682b4" stroke="#fff6f0" stroke-width="0.9"/><path d="M89.7 622V618.5H95.7V622" fill="#4682b4" stroke="#fff6f0" stroke-width="0.9"/><path d="M108.5 622V618.5H114.5V622" fill="#4682b4" stroke="#fff6f0" stroke-width="0.9"/><path d="M127.4 622V618.5H133.4V622" fill="#4682b4" stroke="#fff6f0" stroke-width="0.9"/><path d="M146.3 622V618.5H152.3V622" fill="#4682b4" stroke="#fff6f0" stroke-width="0.9"/><path d="M165.2 622V618.5H171.2V622" fill="#4682b4" stroke="#fff6f0" stroke-width="0.9"/><path d="M184.1 622V618.5H190.1V622" fill="#4682b4" stroke="#fff6f0" stroke-width="0.9"/><path d="M203.0 622V618.5H209.0V622" fill="#4682b4" stroke="#fff6f0" stroke-width="0.9"/><path d="M221.9 622V618.5H227.9V622" fill="#4682b4" stroke="#fff6f0" stroke-width="0.9"/><path d="M240.8 622V618.5H246.8V622" fill="#4682b4" stroke="#fff6f0" stroke-width="0.9"/><path d="M259.8 622V618.5H265.8V622" fill="#4682b4" stroke="#fff6f0" stroke-width="0.9"/><path d="M278.6 622V618.5H284.6V622" fill="#4682b4" stroke="#fff6f0" stroke-width="0.9"/><path d="M297.5 622V618.5H303.5V622" fill="#4682b4" stroke="#fff6f0" stroke-width="0.9"/><path d="M316.4 622V618.5H322.4V622" fill="#4682b4" stroke="#fff6f0" stroke-width="0.9"/><polygon points="342.0,541.0 329.5,567.0 342.0,567.0" fill="#4682b4" stroke="#fff6f0" stroke-width="0"/><circle cx="337.0" cy="560.0" r="1.5" fill="#fff6f0" stroke="#fff6f0" stroke-width="0"/><circle cx="340.0" cy="553.0" r="1.5" fill="#fff6f0" stroke="#fff6f0" stroke-width="0"/><circle cx="334.0" cy="565.0" r="1.5" fill="#fff6f0" stroke="#fff6f0" stroke-width="0"/><rect x="329.5" y="568.0" width="12.5" height="54.0" rx="0" fill="#fd6347" stroke="#fff6f0" stroke-width="1.3"/><circle cx="335.8" cy="576.6" r="3" fill="#4682b4" stroke="#fff6f0" stroke-width="1.2"/><rect x="356.75" y="483.75" width="276.5" height="138.5" fill="#4682b4" stroke="#fff6f0" stroke-width="1.5"/><rect x="357.3" y="485.0" width="10.6" height="49.0" rx="0" fill="#fd6347" stroke="#fff6f0" stroke-width="1.3"/><circle cx="362.3" cy="526.1" r="3" fill="#4682b4" stroke="#fff6f0" stroke-width="1.2"/><rect x="370.1" y="485.8" width="15.2" height="10.4" rx="0" fill="#fd6347" stroke="#fff6f0" stroke-width="1.3"/><ellipse cx="377.5" cy="491" rx="1.4" ry="2.6" fill="#4682b4" stroke="#fff6f0" stroke-width="1"/><rect x="387.3" y="485.8" width="15.2" height="10.4" rx="0" fill="#fd6347" stroke="#fff6f0" stroke-width="1.3"/><ellipse cx="394.7" cy="491" rx="1.4" ry="2.6" fill="#4682b4" stroke="#fff6f0" stroke-width="1"/><rect x="404.5" y="485.8" width="15.2" height="10.4" rx="0" fill="#fd6347" stroke="#fff6f0" stroke-width="1.3"/><ellipse cx="411.9" cy="491" rx="1.4" ry="2.6" fill="#4682b4" stroke="#fff6f0" stroke-width="1"/><rect x="421.7" y="485.8" width="15.2" height="10.4" rx="0" fill="#fd6347" stroke="#fff6f0" stroke-width="1.3"/><ellipse cx="429.1" cy="491" rx="1.4" ry="2.6" fill="#4682b4" stroke="#fff6f0" stroke-width="1"/><rect x="438.9" y="485.8" width="15.2" height="10.4" rx="0" fill="#fd6347" stroke="#fff6f0" stroke-width="1.3"/><ellipse cx="446.3" cy="491" rx="1.4" ry="2.6" fill="#4682b4" stroke="#fff6f0" stroke-width="1"/><rect x="456.1" y="485.8" width="15.2" height="10.4" rx="0" fill="#fd6347" stroke="#fff6f0" stroke-width="1.3"/><ellipse cx="463.5" cy="491" rx="1.4" ry="2.6" fill="#4682b4" stroke="#fff6f0" stroke-width="1"/><rect x="473.3" y="485.8" width="15.2" height="10.4" rx="0" fill="#fd6347" stroke="#fff6f0" stroke-width="1.3"/><ellipse cx="480.7" cy="491" rx="1.4" ry="2.6" fill="#4682b4" stroke="#fff6f0" stroke-width="1"/><rect x="490.5" y="485.8" width="15.2" height="10.4" rx="0" fill="#fd6347" stroke="#fff6f0" stroke-width="1.3"/><ellipse cx="497.9" cy="491" rx="1.4" ry="2.6" fill="#4682b4" stroke="#fff6f0" stroke-width="1"/><rect x="507.7" y="485.8" width="15.2" height="10.4" rx="0" fill="#fd6347" stroke="#fff6f0" stroke-width="1.3"/><ellipse cx="515.1" cy="491" rx="1.4" ry="2.6" fill="#4682b4" stroke="#fff6f0" stroke-width="1"/><rect x="524.9" y="485.8" width="15.2" height="10.4" rx="0" fill="#fd6347" stroke="#fff6f0" stroke-width="1.3"/><ellipse cx="532.3" cy="491" rx="1.4" ry="2.6" fill="#4682b4" stroke="#fff6f0" stroke-width="1"/><rect x="542.1" y="485.8" width="15.2" height="10.4" rx="0" fill="#fd6347" stroke="#fff6f0" stroke-width="1.3"/><ellipse cx="549.5" cy="491" rx="1.4" ry="2.6" fill="#4682b4" stroke="#fff6f0" stroke-width="1"/><rect x="559.3" y="485.8" width="15.2" height="10.4" rx="0" fill="#fd6347" stroke="#fff6f0" stroke-width="1.3"/><ellipse cx="566.7" cy="491" rx="1.4" ry="2.6" fill="#4682b4" stroke="#fff6f0" stroke-width="1"/><rect x="576.2" y="485.4" width="14.5" height="10.8" rx="0" fill="#fd6347" stroke="#fff6f0" stroke-width="1.3"/><rect x="368.0" y="497.0" width="6.0" height="5.0" rx="0" fill="#4682b4" stroke="#fff6f0" stroke-width="0.6"/><rect x="368.0" y="503.0" width="6.0" height="6.0" rx="0" fill="#fd6347" stroke="#fff6f0" stroke-width="0.6"/><rect x="368.0" y="516.0" width="6.0" height="5.0" rx="0" fill="#4682b4" stroke="#fff6f0" stroke-width="0.6"/><rect x="368.0" y="522.0" width="6.0" height="6.0" rx="0" fill="#fd6347" stroke="#fff6f0" stroke-width="0.6"/><rect x="375.1" y="498.9" width="29.5" height="17.3" rx="0" fill="#fd6347" stroke="#fff6f0" stroke-width="1.3"/><rect x="375.1" y="517.2" width="29.5" height="17.2" rx="0" fill="#fd6347" stroke="#fff6f0" stroke-width="1.3"/><rect x="404.6" y="498.9" width="6.0" height="35.5" rx="0" fill="#4682b4" stroke="#fff6f0" stroke-width="0"/><circle cx="405.6" cy="500.0" r="1.5" fill="#fff6f0" stroke="#fff6f0" stroke-width="0"/><circle cx="409.1" cy="507.0" r="1.5" fill="#fff6f0" stroke="#fff6f0" stroke-width="0"/><circle cx="406.1" cy="514.0" r="1.5" fill="#fff6f0" stroke="#fff6f0" stroke-width="0"/><circle cx="409.6" cy="519.0" r="1.5" fill="#fff6f0" stroke="#fff6f0" stroke-width="0"/><circle cx="405.6" cy="526.0" r="1.5" fill="#fff6f0" stroke="#fff6f0" stroke-width="0"/><circle cx="408.6" cy="532.0" r="1.5" fill="#fff6f0" stroke="#fff6f0" stroke-width="0"/><polygon points="406.1,503.0 408.1,501.0 409.6,511.0 407.6,513.0" fill="#4682b4" stroke="#fff6f0" stroke-width="0.9"/><polygon points="406.1,520.0 408.1,518.0 409.6,528.0 407.6,530.0" fill="#4682b4" stroke="#fff6f0" stroke-width="0.9"/><rect x="410.4" y="498.9" width="29.5" height="17.3" rx="0" fill="#fd6347" stroke="#fff6f0" stroke-width="1.3"/><rect x="410.4" y="517.2" width="29.5" height="17.2" rx="0" fill="#fd6347" stroke="#fff6f0" stroke-width="1.3"/><rect x="439.9" y="498.9" width="6.0" height="35.5" rx="0" fill="#4682b4" stroke="#fff6f0" stroke-width="0"/><circle cx="440.9" cy="500.0" r="1.5" fill="#fff6f0" stroke="#fff6f0" stroke-width="0"/><circle cx="444.4" cy="507.0" r="1.5" fill="#fff6f0" stroke="#fff6f0" stroke-width="0"/><circle cx="441.4" cy="514.0" r="1.5" fill="#fff6f0" stroke="#fff6f0" stroke-width="0"/><circle cx="444.9" cy="519.0" r="1.5" fill="#fff6f0" stroke="#fff6f0" stroke-width="0"/><circle cx="440.9" cy="526.0" r="1.5" fill="#fff6f0" stroke="#fff6f0" stroke-width="0"/><circle cx="443.9" cy="532.0" r="1.5" fill="#fff6f0" stroke="#fff6f0" stroke-width="0"/><polygon points="441.4,503.0 443.4,501.0 444.9,511.0 442.9,513.0" fill="#4682b4" stroke="#fff6f0" stroke-width="0.9"/><polygon points="441.4,520.0 443.4,518.0 444.9,528.0 442.9,530.0" fill="#4682b4" stroke="#fff6f0" stroke-width="0.9"/><rect x="445.9" y="498.9" width="29.5" height="17.3" rx="0" fill="#fd6347" stroke="#fff6f0" stroke-width="1.3"/><rect x="445.9" y="517.2" width="29.5" height="17.2" rx="0" fill="#fd6347" stroke="#fff6f0" stroke-width="1.3"/><rect x="475.4" y="498.9" width="6.0" height="35.5" rx="0" fill="#4682b4" stroke="#fff6f0" stroke-width="0"/><circle cx="476.4" cy="500.0" r="1.5" fill="#fff6f0" stroke="#fff6f0" stroke-width="0"/><circle cx="479.9" cy="507.0" r="1.5" fill="#fff6f0" stroke="#fff6f0" stroke-width="0"/><circle cx="476.9" cy="514.0" r="1.5" fill="#fff6f0" stroke="#fff6f0" stroke-width="0"/><circle cx="480.4" cy="519.0" r="1.5" fill="#fff6f0" stroke="#fff6f0" stroke-width="0"/><circle cx="476.4" cy="526.0" r="1.5" fill="#fff6f0" stroke="#fff6f0" stroke-width="0"/><circle cx="479.4" cy="532.0" r="1.5" fill="#fff6f0" stroke="#fff6f0" stroke-width="0"/><polygon points="476.9,503.0 478.9,501.0 480.4,511.0 478.4,513.0" fill="#4682b4" stroke="#fff6f0" stroke-width="0.9"/><polygon points="476.9,520.0 478.9,518.0 480.4,528.0 478.4,530.0" fill="#4682b4" stroke="#fff6f0" stroke-width="0.9"/><rect x="481.4" y="498.9" width="29.5" height="17.3" rx="0" fill="#fd6347" stroke="#fff6f0" stroke-width="1.3"/><rect x="481.4" y="517.2" width="29.5" height="17.2" rx="0" fill="#fd6347" stroke="#fff6f0" stroke-width="1.3"/><rect x="510.9" y="498.9" width="6.0" height="35.5" rx="0" fill="#4682b4" stroke="#fff6f0" stroke-width="0"/><circle cx="511.9" cy="500.0" r="1.5" fill="#fff6f0" stroke="#fff6f0" stroke-width="0"/><circle cx="515.4" cy="507.0" r="1.5" fill="#fff6f0" stroke="#fff6f0" stroke-width="0"/><circle cx="512.4" cy="514.0" r="1.5" fill="#fff6f0" stroke="#fff6f0" stroke-width="0"/><circle cx="515.9" cy="519.0" r="1.5" fill="#fff6f0" stroke="#fff6f0" stroke-width="0"/><circle cx="511.9" cy="526.0" r="1.5" fill="#fff6f0" stroke="#fff6f0" stroke-width="0"/><circle cx="514.9" cy="532.0" r="1.5" fill="#fff6f0" stroke="#fff6f0" stroke-width="0"/><polygon points="512.4,503.0 514.4,501.0 515.9,511.0 513.9,513.0" fill="#4682b4" stroke="#fff6f0" stroke-width="0.9"/><polygon points="512.4,520.0 514.4,518.0 515.9,528.0 513.9,530.0" fill="#4682b4" stroke="#fff6f0" stroke-width="0.9"/><rect x="516.9" y="498.9" width="29.5" height="17.3" rx="0" fill="#fd6347" stroke="#fff6f0" stroke-width="1.3"/><rect x="516.9" y="517.2" width="29.5" height="17.2" rx="0" fill="#fd6347" stroke="#fff6f0" stroke-width="1.3"/><rect x="546.4" y="498.9" width="6.0" height="35.5" rx="0" fill="#4682b4" stroke="#fff6f0" stroke-width="0"/><circle cx="547.4" cy="500.0" r="1.5" fill="#fff6f0" stroke="#fff6f0" stroke-width="0"/><circle cx="550.9" cy="507.0" r="1.5" fill="#fff6f0" stroke="#fff6f0" stroke-width="0"/><circle cx="547.9" cy="514.0" r="1.5" fill="#fff6f0" stroke="#fff6f0" stroke-width="0"/><circle cx="551.4" cy="519.0" r="1.5" fill="#fff6f0" stroke="#fff6f0" stroke-width="0"/><circle cx="547.4" cy="526.0" r="1.5" fill="#fff6f0" stroke="#fff6f0" stroke-width="0"/><circle cx="550.4" cy="532.0" r="1.5" fill="#fff6f0" stroke="#fff6f0" stroke-width="0"/><polygon points="547.9,503.0 549.9,501.0 551.4,511.0 549.4,513.0" fill="#4682b4" stroke="#fff6f0" stroke-width="0.9"/><polygon points="547.9,520.0 549.9,518.0 551.4,528.0 549.4,530.0" fill="#4682b4" stroke="#fff6f0" stroke-width="0.9"/><rect x="552.4" y="498.9" width="29.5" height="17.3" rx="0" fill="#fd6347" stroke="#fff6f0" stroke-width="1.3"/><rect x="552.4" y="517.2" width="29.5" height="17.2" rx="0" fill="#fd6347" stroke="#fff6f0" stroke-width="1.3"/><rect x="581.9" y="498.9" width="6.0" height="35.5" rx="0" fill="#4682b4" stroke="#fff6f0" stroke-width="0"/><circle cx="582.9" cy="500.0" r="1.5" fill="#fff6f0" stroke="#fff6f0" stroke-width="0"/><circle cx="586.4" cy="507.0" r="1.5" fill="#fff6f0" stroke="#fff6f0" stroke-width="0"/><circle cx="583.4" cy="514.0" r="1.5" fill="#fff6f0" stroke="#fff6f0" stroke-width="0"/><circle cx="586.9" cy="519.0" r="1.5" fill="#fff6f0" stroke="#fff6f0" stroke-width="0"/><circle cx="582.9" cy="526.0" r="1.5" fill="#fff6f0" stroke="#fff6f0" stroke-width="0"/><circle cx="585.9" cy="532.0" r="1.5" fill="#fff6f0" stroke="#fff6f0" stroke-width="0"/><polygon points="583.4,503.0 585.4,501.0 586.9,511.0 584.9,513.0" fill="#4682b4" stroke="#fff6f0" stroke-width="0.9"/><polygon points="583.4,520.0 585.4,518.0 586.9,528.0 584.9,530.0" fill="#4682b4" stroke="#fff6f0" stroke-width="0.9"/><rect x="592.0" y="485.4" width="5.5" height="10.6" rx="0" fill="#4682b4" stroke="#fff6f0" stroke-width="0"/><rect x="597.9" y="485.2" width="29.4" height="16.5" rx="0" fill="#fd6347" stroke="#fff6f0" stroke-width="1.3"/><rect x="627.3" y="485.2" width="5.7" height="10.8" rx="0" fill="#4682b4" stroke="#fff6f0" stroke-width="0"/><rect x="591.8" y="496.2" width="5.2" height="5.8" rx="0" fill="#fd6347" stroke="#fff6f0" stroke-width="1.3"/><rect x="627.3" y="496.0" width="5.7" height="6.0" rx="0" fill="#fd6347" stroke="#fff6f0" stroke-width="1.3"/><rect x="589.6" y="502.8" width="27.2" height="11.4" rx="0" fill="#fd6347" stroke="#fff6f0" stroke-width="1.3"/><rect x="616.8" y="502.8" width="16.2" height="11.4" rx="0" fill="#fd6347" stroke="#fff6f0" stroke-width="1.3"/><rect x="589.6" y="515.6" width="27.7" height="16.8" rx="0" fill="#fd6347" stroke="#fff6f0" stroke-width="1.3"/><rect x="617.3" y="515.0" width="15.7" height="20.0" rx="0" fill="#4682b4" stroke="#fff6f0" stroke-width="0"/><circle cx="621.0" cy="520.0" r="1.6" fill="#fff6f0" stroke="#fff6f0" stroke-width="0"/><circle cx="626.0" cy="525.0" r="1.6" fill="#fff6f0" stroke="#fff6f0" stroke-width="0"/><circle cx="630.0" cy="518.0" r="1.6" fill="#fff6f0" stroke="#fff6f0" stroke-width="0"/><circle cx="623.0" cy="530.0" r="1.6" fill="#fff6f0" stroke="#fff6f0" stroke-width="0"/><circle cx="629.0" cy="531.0" r="1.6" fill="#fff6f0" stroke="#fff6f0" stroke-width="0"/><rect x="357.0" y="535.4" width="53.7" height="11.5" rx="0" fill="#fd6347" stroke="#fff6f0" stroke-width="1.3"/><rect x="410.7" y="535.4" width="50.5" height="11.5" rx="0" fill="#fd6347" stroke="#fff6f0" stroke-width="1.3"/><rect x="461.2" y="535.4" width="51.1" height="11.5" rx="0" fill="#fd6347" stroke="#fff6f0" stroke-width="1.3"/><rect x="512.3" y="535.4" width="50.0" height="11.5" rx="0" fill="#fd6347" stroke="#fff6f0" stroke-width="1.3"/><rect x="562.3" y="535.4" width="26.7" height="11.5" rx="0" fill="#fd6347" stroke="#fff6f0" stroke-width="1.3"/><circle cx="402.3" cy="541.1" r="3.1" fill="#4682b4" stroke="#fff6f0" stroke-width="1.3"/><circle cx="452.9" cy="541.1" r="3.1" fill="#4682b4" stroke="#fff6f0" stroke-width="1.3"/><circle cx="503.4" cy="541.1" r="3.1" fill="#4682b4" stroke="#fff6f0" stroke-width="1.3"/><circle cx="554.6" cy="541.1" r="3.1" fill="#4682b4" stroke="#fff6f0" stroke-width="1.3"/><rect x="357.0" y="547.6" width="53.7" height="11.5" rx="0" fill="#fd6347" stroke="#fff6f0" stroke-width="1.3"/><rect x="410.7" y="547.6" width="50.5" height="11.5" rx="0" fill="#fd6347" stroke="#fff6f0" stroke-width="1.3"/><rect x="461.2" y="547.6" width="51.1" height="11.5" rx="0" fill="#fd6347" stroke="#fff6f0" stroke-width="1.3"/><rect x="512.3" y="547.6" width="50.0" height="11.5" rx="0" fill="#fd6347" stroke="#fff6f0" stroke-width="1.3"/><rect x="562.3" y="547.6" width="26.7" height="11.5" rx="0" fill="#fd6347" stroke="#fff6f0" stroke-width="1.3"/><circle cx="402.3" cy="553.4" r="3.1" fill="#4682b4" stroke="#fff6f0" stroke-width="1.3"/><circle cx="452.9" cy="553.4" r="3.1" fill="#4682b4" stroke="#fff6f0" stroke-width="1.3"/><circle cx="503.4" cy="553.4" r="3.1" fill="#4682b4" stroke="#fff6f0" stroke-width="1.3"/><circle cx="554.6" cy="553.4" r="3.1" fill="#4682b4" stroke="#fff6f0" stroke-width="1.3"/><rect x="589.6" y="535.2" width="14.4" height="12.8" rx="0" fill="#fd6347" stroke="#fff6f0" stroke-width="1.3"/><circle cx="595.7" cy="540.6" r="2.4" fill="#4682b4" stroke="#fff6f0" stroke-width="1"/><rect x="589.6" y="548.0" width="14.4" height="20.0" rx="0" fill="#4682b4" stroke="#fff6f0" stroke-width="0"/><circle cx="593.0" cy="552.0" r="1.4" fill="#fff6f0" stroke="#fff6f0" stroke-width="0"/><circle cx="597.0" cy="556.0" r="1.4" fill="#fff6f0" stroke="#fff6f0" stroke-width="0"/><circle cx="592.0" cy="560.0" r="1.4" fill="#fff6f0" stroke="#fff6f0" stroke-width="0"/><circle cx="600.0" cy="562.0" r="1.4" fill="#fff6f0" stroke="#fff6f0" stroke-width="0"/><circle cx="596.0" cy="565.0" r="1.4" fill="#fff6f0" stroke="#fff6f0" stroke-width="0"/><polygon points="604.7,535.0 620.5,535.0 610.0,567.6 610.0,621.5 592.8,621.5 592.8,568.3" fill="#fd6347" stroke="#fff6f0" stroke-width="1.3"/><rect x="622.0" y="535.2" width="11.0" height="30.8" rx="0" fill="#fd6347" stroke="#fff6f0" stroke-width="1.3"/><polygon points="620.8,535.5 622.0,535.5 622.0,566.0 611.0,566.0" fill="#4682b4" stroke="#fff6f0" stroke-width="0"/><rect x="612.5" y="560.0" width="8.0" height="6.5" rx="0" fill="#fd6347" stroke="#fff6f0" stroke-width="0.9"/><rect x="611.5" y="567.0" width="21.5" height="55.0" rx="0" fill="#fd6347" stroke="#fff6f0" stroke-width="1.3"/><path d="M612 577.5 A16 15.75 0 0 1 612 609 Z" fill="#4682b4" stroke="#fff6f0" stroke-width="1"/><polygon points="614.0,583.0 620.0,581.0 622.0,594.0 627.0,598.0 624.0,606.0 614.0,604.0" fill="#fd6347" stroke="#fff6f0" stroke-width="1"/><circle cx="617.5" cy="584.0" r="1.7" fill="#4682b4" stroke="#fff6f0" stroke-width="0.8"/><polygon points="617.0,595.0 621.0,601.0 617.0,602.0" fill="#4682b4" stroke="#fff6f0" stroke-width="0.6"/><rect x="579.8" y="568.0" width="12.7" height="53.5" rx="0" fill="#4682b4" stroke="#fff6f0" stroke-width="0"/><circle cx="583.0" cy="572.0" r="1.4" fill="#fff6f0" stroke="#fff6f0" stroke-width="0"/><circle cx="587.0" cy="575.0" r="1.4" fill="#fff6f0" stroke="#fff6f0" stroke-width="0"/><circle cx="584.0" cy="578.0" r="1.4" fill="#fff6f0" stroke="#fff6f0" stroke-width="0"/><polygon points="580.5,580.0 586.0,580.0 592.0,600.0 590.0,604.0 580.5,604.0" fill="#fd6347" stroke="#fff6f0" stroke-width="1"/><polygon points="580.5,606.0 590.0,606.0 592.0,621.5 580.5,621.5" fill="#fd6347" stroke="#fff6f0" stroke-width="1"/><circle cx="586.6" cy="596.0" r="2" fill="#4682b4" stroke="#fff6f0" stroke-width="0.9"/><circle cx="586.6" cy="617.5" r="2" fill="#4682b4" stroke="#fff6f0" stroke-width="0.9"/><rect x="357.0" y="560.2" width="222.5" height="30.4" rx="0" fill="#fd6347" stroke="#fff6f0" stroke-width="1.3"/><path d="M366 586.2 C366 571.2 370 567.2 376 567.2 L395 567.2 C400 567.2 399 583.2 404 583.2 L421 583.2 C426 583.2 426 567.2 431 567.2 L450 567.2 C455 567.2 454 583.2 459 583.2 L476 583.2 C481 583.2 481 567.2 486 567.2 L505 567.2 C510 567.2 509 583.2 514 583.2 L531 583.2 C536 583.2 536 567.2 541 567.2 L560 567.2 C564 567.2 566 573.2 566 577.2" fill="none" stroke="#fff6f0" stroke-width="4.6" stroke-linejoin="round"/><path d="M366 586.2 C366 571.2 370 567.2 376 567.2 L395 567.2 C400 567.2 399 583.2 404 583.2 L421 583.2 C426 583.2 426 567.2 431 567.2 L450 567.2 C455 567.2 454 583.2 459 583.2 L476 583.2 C481 583.2 481 567.2 486 567.2 L505 567.2 C510 567.2 509 583.2 514 583.2 L531 583.2 C536 583.2 536 567.2 541 567.2 L560 567.2 C564 567.2 566 573.2 566 577.2" fill="none" stroke="#4682b4" stroke-width="2.5" stroke-linejoin="round"/><path d="M412.5 560.2L412.5 580.6" stroke="#fff6f0" stroke-width="1.3"/><path d="M467.8 560.2L467.8 580.6" stroke="#fff6f0" stroke-width="1.3"/><path d="M523.0 560.2L523.0 580.6" stroke="#fff6f0" stroke-width="1.3"/><path d="M385.5 569.8L385.5 590.6" stroke="#fff6f0" stroke-width="1.3"/><path d="M440.5 569.8L440.5 590.6" stroke="#fff6f0" stroke-width="1.3"/><path d="M495.5 569.8L495.5 590.6" stroke="#fff6f0" stroke-width="1.3"/><path d="M550.5 569.8L550.5 590.6" stroke="#fff6f0" stroke-width="1.3"/><path d="M357.0 590.6L579.5 590.6" stroke="#fff6f0" stroke-width="1.5"/><rect x="368.0" y="573.2" width="14.0" height="17.4" rx="0" fill="#fd6347" stroke="#fff6f0" stroke-width="1.0"/><rect x="372.5" y="580.2" width="4.5" height="3.0" rx="0" fill="none" stroke="#fff6f0" stroke-width="0.8"/><rect x="370.0" y="567.2" width="3.0" height="6.0" rx="0" fill="#fd6347" stroke="#fff6f0" stroke-width="0.7"/><rect x="357.0" y="591.2" width="222.5" height="30.3" rx="0" fill="#fd6347" stroke="#fff6f0" stroke-width="1.3"/><path d="M366 617.2 C366 602.2 370 598.2 376 598.2 L395 598.2 C400 598.2 399 614.2 404 614.2 L421 614.2 C426 614.2 426 598.2 431 598.2 L450 598.2 C455 598.2 454 614.2 459 614.2 L476 614.2 C481 614.2 481 598.2 486 598.2 L505 598.2 C510 598.2 509 614.2 514 614.2 L531 614.2 C536 614.2 536 598.2 541 598.2 L560 598.2 C564 598.2 566 604.2 566 608.2" fill="none" stroke="#fff6f0" stroke-width="4.6" stroke-linejoin="round"/><path d="M366 617.2 C366 602.2 370 598.2 376 598.2 L395 598.2 C400 598.2 399 614.2 404 614.2 L421 614.2 C426 614.2 426 598.2 431 598.2 L450 598.2 C455 598.2 454 614.2 459 614.2 L476 614.2 C481 614.2 481 598.2 486 598.2 L505 598.2 C510 598.2 509 614.2 514 614.2 L531 614.2 C536 614.2 536 598.2 541 598.2 L560 598.2 C564 598.2 566 604.2 566 608.2" fill="none" stroke="#4682b4" stroke-width="2.5" stroke-linejoin="round"/><path d="M412.5 591.2L412.5 611.6" stroke="#fff6f0" stroke-width="1.3"/><path d="M467.8 591.2L467.8 611.6" stroke="#fff6f0" stroke-width="1.3"/><path d="M523.0 591.2L523.0 611.6" stroke="#fff6f0" stroke-width="1.3"/><path d="M385.5 600.8L385.5 621.5" stroke="#fff6f0" stroke-width="1.3"/><path d="M440.5 600.8L440.5 621.5" stroke="#fff6f0" stroke-width="1.3"/><path d="M495.5 600.8L495.5 621.5" stroke="#fff6f0" stroke-width="1.3"/><path d="M550.5 600.8L550.5 621.5" stroke="#fff6f0" stroke-width="1.3"/><path d="M357.0 621.5L579.5 621.5" stroke="#fff6f0" stroke-width="1.5"/><rect x="368.0" y="604.2" width="14.0" height="17.3" rx="0" fill="#fd6347" stroke="#fff6f0" stroke-width="1.0"/><rect x="372.5" y="611.2" width="4.5" height="3.0" rx="0" fill="none" stroke="#fff6f0" stroke-width="0.8"/><rect x="370.0" y="598.2" width="3.0" height="6.0" rx="0" fill="#fd6347" stroke="#fff6f0" stroke-width="0.7"/><rect x="357.0" y="583.5" width="11.0" height="7.0" rx="0" fill="#4682b4" stroke="#fff6f0" stroke-width="0"/><rect x="358.5" y="584.5" width="3.0" height="5.5" rx="0" fill="#fd6347" stroke="#fff6f0" stroke-width="0.6"/><rect x="363.0" y="584.5" width="3.0" height="5.5" rx="0" fill="#fd6347" stroke="#fff6f0" stroke-width="0.6"/><rect x="357.0" y="613.0" width="11.0" height="8.5" rx="0" fill="#4682b4" stroke="#fff6f0" stroke-width="0"/><circle cx="360.0" cy="616.0" r="1.4" fill="#fff6f0" stroke="#fff6f0" stroke-width="0"/><circle cx="364.0" cy="618.0" r="1.4" fill="#fff6f0" stroke="#fff6f0" stroke-width="0"/><circle cx="361.0" cy="620.0" r="1.4" fill="#fff6f0" stroke="#fff6f0" stroke-width="0"/><rect x="556.0" y="566.0" width="23.5" height="24.0" rx="0" fill="#4682b4" stroke="#fff6f0" stroke-width="0"/><path d="M560 583 a4.5 4.5 0 1 1 6 3 L578 585 L578 589 L564 589 Z" fill="#fd6347" stroke="#fff6f0" stroke-width="0.9"/><rect x="566.0" y="569.0" width="5.0" height="8.0" rx="0" fill="#fd6347" stroke="#fff6f0" stroke-width="0.8"/><circle cx="558.0" cy="569.0" r="1.4" fill="#fff6f0" stroke="#fff6f0" stroke-width="0"/><circle cx="562.0" cy="572.0" r="1.4" fill="#fff6f0" stroke="#fff6f0" stroke-width="0"/><circle cx="575.0" cy="569.0" r="1.4" fill="#fff6f0" stroke="#fff6f0" stroke-width="0"/><circle cx="576.0" cy="575.0" r="1.4" fill="#fff6f0" stroke="#fff6f0" stroke-width="0"/><rect x="556.0" y="597.0" width="23.5" height="24.5" rx="0" fill="#4682b4" stroke="#fff6f0" stroke-width="0"/><rect x="557.0" y="603.0" width="14.0" height="18.0" rx="0" fill="#fd6347" stroke="#fff6f0" stroke-width="0.9"/><rect x="563.0" y="610.0" width="5.0" height="3.0" rx="0" fill="none" stroke="#fff6f0" stroke-width="0.8"/><rect x="566.0" y="596.0" width="5.0" height="6.0" rx="0" fill="#fd6347" stroke="#fff6f0" stroke-width="0.8"/><circle cx="573.0" cy="612.0" r="1.4" fill="#fff6f0" stroke="#fff6f0" stroke-width="0"/><circle cx="577.0" cy="617.0" r="1.4" fill="#fff6f0" stroke="#fff6f0" stroke-width="0"/><circle cx="574.0" cy="620.0" r="1.4" fill="#fff6f0" stroke="#fff6f0" stroke-width="0"/><rect x="647.75" y="483.75" width="276.5" height="138.5" fill="#4682b4" stroke="#fff6f0" stroke-width="1.5"/><rect x="648.3" y="485.1" width="40.0" height="17.6" rx="8.8" fill="#fd6347" stroke="#fff6f0" stroke-width="1.3"/><circle cx="655.0" cy="493.9" r="3.2" fill="#4682b4" stroke="#fff6f0" stroke-width="1.2"/><circle cx="678.8" cy="493.9" r="5" fill="#4682b4" stroke="#fff6f0" stroke-width="1.2"/><rect x="648.3" y="504.4" width="40.0" height="18.3" rx="9.2" fill="#fd6347" stroke="#fff6f0" stroke-width="1.3"/><circle cx="657.2" cy="513.8" r="5" fill="#4682b4" stroke="#fff6f0" stroke-width="1.2"/><circle cx="681.6" cy="513.8" r="3.2" fill="#4682b4" stroke="#fff6f0" stroke-width="1.2"/><rect x="648.3" y="524.6" width="18.7" height="30.9" rx="0" fill="#fd6347" stroke="#fff6f0" stroke-width="1.3"/><rect x="667.7" y="524.8" width="18.5" height="40.0" rx="9.2" fill="#fd6347" stroke="#fff6f0" stroke-width="1.3"/><circle cx="676.0" cy="533.3" r="3.2" fill="#4682b4" stroke="#fff6f0" stroke-width="1.2"/><circle cx="675.6" cy="557.2" r="5" fill="#4682b4" stroke="#fff6f0" stroke-width="1.2"/><rect x="648.3" y="561.1" width="18.9" height="39.9" rx="9.5" fill="#fd6347" stroke="#fff6f0" stroke-width="1.3"/><circle cx="656.8" cy="570.5" r="5" fill="#4682b4" stroke="#fff6f0" stroke-width="1.2"/><circle cx="657.2" cy="594.4" r="3.2" fill="#4682b4" stroke="#fff6f0" stroke-width="1.2"/><rect x="667.7" y="567.8" width="16.7" height="16.5" rx="0" fill="#fd6347" stroke="#fff6f0" stroke-width="1.3"/><rect x="667.7" y="585.3" width="16.7" height="15.5" rx="0" fill="#fd6347" stroke="#fff6f0" stroke-width="1.3"/><rect x="648.3" y="603.3" width="40.0" height="17.7" rx="8.9" fill="#fd6347" stroke="#fff6f0" stroke-width="1.3"/><circle cx="655.0" cy="611.6" r="3.2" fill="#4682b4" stroke="#fff6f0" stroke-width="1.2"/><circle cx="678.8" cy="611.6" r="5" fill="#4682b4" stroke="#fff6f0" stroke-width="1.2"/><rect x="651.0" y="608.5" width="2.0" height="5.5" rx="0" fill="none" stroke="#fff6f0" stroke-width="0.6"/><polygon points="690.5,485.5 711.6,485.3 716.6,490.5 712.7,496.0 691.6,496.8" fill="#fd6347" stroke="#fff6f0" stroke-width="1.3"/><polygon points="695.0,487.0 703.8,486.7 702.8,492.2 695.5,492.8" fill="#4682b4" stroke="#fff6f0" stroke-width="1"/><circle cx="712.3" cy="490.6" r="1.9" fill="#4682b4" stroke="#fff6f0" stroke-width="1"/><path d="M690.5 498.5 L712 497.5 L713.5 508.5 L691 509.5 Q686.5 504 690.5 498.5 Z" fill="#fd6347" stroke="#fff6f0" stroke-width="1.3"/><polygon points="700.5,500.2 709.3,499.6 709.5,506.4 701.0,506.8" fill="#4682b4" stroke="#fff6f0" stroke-width="1"/><circle cx="690.8" cy="503.5" r="2" fill="#4682b4" stroke="#fff6f0" stroke-width="1"/><polygon points="716.2,494.6 729.3,494.8 729.5,519.5 724.0,523.0 716.0,511.0" fill="#fd6347" stroke="#fff6f0" stroke-width="1.3"/><polygon points="720.4,499.0 727.0,499.0 726.8,506.6 721.5,505.0" fill="#4682b4" stroke="#fff6f0" stroke-width="1"/><circle cx="723.4" cy="517.4" r="2" fill="#4682b4" stroke="#fff6f0" stroke-width="1"/><polygon points="690.5,510.5 711.6,510.0 710.0,519.0 697.0,522.5 690.5,521.0" fill="#fd6347" stroke="#fff6f0" stroke-width="1.3"/><circle cx="694.0" cy="518.5" r="2" fill="#4682b4" stroke="#fff6f0" stroke-width="1"/><polygon points="697.0,512.3 708.0,512.0 703.0,516.5" fill="#4682b4" stroke="#fff6f0" stroke-width="0.8"/><path d="M689.9 530.4 A4.2 4.2 0 1 1 690.5 524.6 L707.3 527.1 Q707 529.8 706.7 531.9 Z" fill="#fd6347" stroke="#fff6f0" stroke-width="1.3"/><path d="M708 517 Q716 514 720 521 Q721 529 713 530 Q707 527 708 517 Z" fill="#fd6347" stroke="#fff6f0" stroke-width="1.3"/><path d="M708.4 534.4 A4.6 4.6 0 1 1 714.8 534.6 L713.3 553.1 Q711 555.3 708.7 552.9 Z" fill="#fd6347" stroke="#fff6f0" stroke-width="1.3"/><path d="M697.1 546.0 A4.2 4.2 0 1 1 702.9 546.0 L702.3 556.0 Q700 558.3 697.7 556.0 Z" fill="#fd6347" stroke="#fff6f0" stroke-width="1.3"/><rect x="717.1" y="522.7" width="12.2" height="28.8" rx="0" fill="#fd6347" stroke="#fff6f0" stroke-width="1.3"/><circle cx="689.0" cy="533.0" r="1.5" fill="#fff6f0" stroke="#fff6f0" stroke-width="0"/><circle cx="692.0" cy="537.0" r="1.5" fill="#fff6f0" stroke="#fff6f0" stroke-width="0"/><circle cx="688.5" cy="540.0" r="1.5" fill="#fff6f0" stroke="#fff6f0" stroke-width="0"/><circle cx="693.0" cy="542.0" r="1.5" fill="#fff6f0" stroke="#fff6f0" stroke-width="0"/><polygon points="686.2,564.0 697.1,564.0 697.5,580.0 692.0,594.4 686.2,594.4" fill="#fd6347" stroke="#fff6f0" stroke-width="1.3"/><path d="M702.5 591.5 A4.4 4.4 0 1 1 696.3 591.5 L697.2 575.0 Q699.4 572.8 701.6 575.0 Z" fill="#fd6347" stroke="#fff6f0" stroke-width="1.3"/><path d="M703.9 569.9 A4.6 4.6 0 1 1 710.3 570.1 L708.8 588.1 Q706.6 590.2 704.4 587.9 Z" fill="#fd6347" stroke="#fff6f0" stroke-width="1.3"/><path d="M714.7 591.5 A4.4 4.4 0 1 1 708.5 591.5 L709.4 575.0 Q711.6 572.8 713.8 575.0 Z" fill="#fd6347" stroke="#fff6f0" stroke-width="1.3"/><rect x="716.0" y="553.3" width="13.3" height="30.0" rx="0" fill="#fd6347" stroke="#fff6f0" stroke-width="1.3"/><path d="M691.1 601.7 A4.2 4.2 0 1 1 692.1 595.9 L708.6 599.3 Q708.2 601.9 707.8 603.7 Z" fill="#fd6347" stroke="#fff6f0" stroke-width="1.3"/><path d="M694 606 Q700 604.5 708 606.5 Q712 608.8 708 611 Q700 613 694 611 Q690 608.8 694 606 Z" fill="#fd6347" stroke="#fff6f0" stroke-width="1.3"/><path d="M694.6 618.8 A4 4 0 1 1 695.4 613.2 L711.9 616.0 Q711.6 618.5 711.3 620.4 Z" fill="#fd6347" stroke="#fff6f0" stroke-width="1.3"/><path d="M711.6 597.0 A4.2 4.2 0 1 1 717.4 597.0 L716.6 620.5 Q714.5 622.6 712.4 620.5 Z" fill="#fd6347" stroke="#fff6f0" stroke-width="1.3"/><path d="M721.1 598.7 A4.2 4.2 0 1 1 726.9 599.3 L724.1 620.7 Q722 622.6 719.9 620.3 Z" fill="#fd6347" stroke="#fff6f0" stroke-width="1.3"/><path d="M730.9 597.9 A4.2 4.2 0 1 1 736.7 598.1 L735.1 620.6 Q733 622.6 730.9 620.4 Z" fill="#fd6347" stroke="#fff6f0" stroke-width="1.3"/><path d="M738.8 600.0 A3.8 3.8 0 1 1 744.2 600.0 L743.5 620.5 Q741.5 622.5 739.5 620.5 Z" fill="#fd6347" stroke="#fff6f0" stroke-width="1.3"/><rect x="718.2" y="585.5" width="12.2" height="11.1" rx="0" fill="#fd6347" stroke="#fff6f0" stroke-width="1.3"/><circle cx="724.3" cy="591.6" r="1.9" fill="#4682b4" stroke="#fff6f0" stroke-width="1"/><rect x="732.0" y="584.5" width="12.5" height="12.1" rx="0" fill="#fd6347" stroke="#fff6f0" stroke-width="1.3"/><circle cx="737.6" cy="590.5" r="1.9" fill="#4682b4" stroke="#fff6f0" stroke-width="1"/><circle cx="705.0" cy="555.0" r="1.5" fill="#fff6f0" stroke="#fff6f0" stroke-width="0"/><circle cx="709.0" cy="553.5" r="1.5" fill="#fff6f0" stroke="#fff6f0" stroke-width="0"/><circle cx="714.0" cy="556.0" r="1.5" fill="#fff6f0" stroke="#fff6f0" stroke-width="0"/><circle cx="702.0" cy="558.0" r="1.5" fill="#fff6f0" stroke="#fff6f0" stroke-width="0"/><polygon points="720.4,485.5 749.3,485.3 749.3,496.8 730.0,496.8" fill="#fd6347" stroke="#fff6f0" stroke-width="1.3"/><rect x="730.4" y="497.7" width="15.6" height="16.7" rx="0" fill="#fd6347" stroke="#fff6f0" stroke-width="1.3"/><rect x="730.4" y="515.5" width="15.6" height="15.5" rx="0" fill="#fd6347" stroke="#fff6f0" stroke-width="1.3"/><rect x="730.4" y="532.1" width="15.6" height="17.8" rx="0" fill="#fd6347" stroke="#fff6f0" stroke-width="1.3"/><rect x="730.4" y="551.0" width="15.6" height="14.5" rx="0" fill="#fd6347" stroke="#fff6f0" stroke-width="1.3"/><rect x="730.4" y="566.6" width="15.0" height="16.1" rx="0" fill="#fd6347" stroke="#fff6f0" stroke-width="1.3"/><rect x="751.0" y="485.3" width="16.0" height="14.1" rx="0" fill="#fd6347" stroke="#fff6f0" stroke-width="1.3"/><rect x="768.1" y="485.3" width="16.1" height="14.1" rx="0" fill="#fd6347" stroke="#fff6f0" stroke-width="1.3"/><rect x="747.0" y="501.0" width="12.3" height="26.7" rx="0" fill="#fd6347" stroke="#fff6f0" stroke-width="1.3"/><rect x="759.8" y="501.0" width="11.1" height="26.7" rx="0" fill="#fd6347" stroke="#fff6f0" stroke-width="1.3"/><rect x="772.6" y="503.3" width="11.6" height="25.5" rx="0" fill="#fd6347" stroke="#fff6f0" stroke-width="1.3"/><polygon points="747.2,530.0 759.0,530.0 758.5,560.0 744.8,561.0" fill="#fd6347" stroke="#fff6f0" stroke-width="1.3"/><polygon points="760.6,530.0 770.9,530.0 770.5,561.0 760.0,561.0" fill="#fd6347" stroke="#fff6f0" stroke-width="1.3"/><polygon points="772.6,531.0 784.2,531.0 784.0,546.0 779.0,561.0 772.6,561.0" fill="#fd6347" stroke="#fff6f0" stroke-width="1.3"/><rect x="749.3" y="562.3" width="11.7" height="11.7" rx="0" fill="#fd6347" stroke="#fff6f0" stroke-width="1.3"/><circle cx="753.2" cy="567.2" r="1.9" fill="#4682b4" stroke="#fff6f0" stroke-width="1"/><rect x="761.0" y="561.6" width="16.0" height="15.0" rx="0" fill="#fd6347" stroke="#fff6f0" stroke-width="1.3"/><polygon points="777.5,561.0 785.0,561.0 782.0,578.0 777.5,578.0" fill="#fd6347" stroke="#fff6f0" stroke-width="1.3"/><polygon points="747.0,575.5 757.0,577.0 757.0,603.3 744.8,603.3" fill="#fd6347" stroke="#fff6f0" stroke-width="1.3"/><rect x="758.2" y="578.3" width="10.5" height="25.0" rx="0" fill="#fd6347" stroke="#fff6f0" stroke-width="1.3"/><rect x="769.8" y="578.3" width="11.1" height="25.0" rx="0" fill="#fd6347" stroke="#fff6f0" stroke-width="1.3"/><rect x="782.0" y="578.3" width="11.6" height="24.9" rx="0" fill="#fd6347" stroke="#fff6f0" stroke-width="1.3"/><rect x="746.0" y="605.5" width="16.0" height="15.5" rx="0" fill="#fd6347" stroke="#fff6f0" stroke-width="1.3"/><rect x="763.7" y="605.5" width="16.1" height="15.5" rx="0" fill="#fd6347" stroke="#fff6f0" stroke-width="1.3"/><rect x="780.9" y="606.6" width="16.1" height="14.2" rx="0" fill="#fd6347" stroke="#fff6f0" stroke-width="1.3"/><rect x="784.5" y="485.7" width="12.5" height="28.8" rx="0" fill="#fd6347" stroke="#fff6f0" stroke-width="1.3"/><rect x="798.1" y="485.7" width="10.8" height="28.8" rx="0" fill="#fd6347" stroke="#fff6f0" stroke-width="1.3"/><polygon points="810.0,485.7 821.9,485.7 821.9,500.0 816.0,514.5 810.0,514.5" fill="#fd6347" stroke="#fff6f0" stroke-width="1.3"/><rect x="823.0" y="485.7" width="15.9" height="15.3" rx="0" fill="#fd6347" stroke="#fff6f0" stroke-width="1.3"/><rect x="784.5" y="516.2" width="12.5" height="29.5" rx="0" fill="#fd6347" stroke="#fff6f0" stroke-width="1.3"/><rect x="798.7" y="516.8" width="15.8" height="15.9" rx="0" fill="#fd6347" stroke="#fff6f0" stroke-width="1.3"/><polygon points="822.0,501.5 828.7,502.0 828.7,532.7 815.0,532.7 815.5,516.5" fill="#fd6347" stroke="#fff6f0" stroke-width="1.3"/><rect x="829.8" y="502.7" width="11.4" height="28.3" rx="0" fill="#fd6347" stroke="#fff6f0" stroke-width="1.3"/><rect x="842.3" y="505.0" width="10.7" height="26.0" rx="0" fill="#fd6347" stroke="#fff6f0" stroke-width="1.3"/><rect x="854.8" y="505.0" width="10.7" height="27.7" rx="0" fill="#fd6347" stroke="#fff6f0" stroke-width="1.3"/><rect x="867.2" y="505.0" width="10.8" height="27.7" rx="0" fill="#fd6347" stroke="#fff6f0" stroke-width="1.3"/><rect x="879.7" y="505.0" width="10.2" height="27.7" rx="0" fill="#fd6347" stroke="#fff6f0" stroke-width="1.3"/><polygon points="891.6,505.0 921.0,505.0 921.0,516.8 903.0,515.0 891.6,510.0" fill="#fd6347" stroke="#fff6f0" stroke-width="1.3"/><rect x="891.6" y="517.4" width="10.7" height="27.2" rx="0" fill="#fd6347" stroke="#fff6f0" stroke-width="1.3"/><rect x="891.6" y="545.7" width="10.7" height="26.3" rx="0" fill="#fd6347" stroke="#fff6f0" stroke-width="1.3"/><rect x="904.0" y="519.0" width="18.0" height="40.3" rx="9.0" fill="#fd6347" stroke="#fff6f0" stroke-width="1.3"/><circle cx="913.1" cy="525.9" r="3.3" fill="#4682b4" stroke="#fff6f0" stroke-width="1.2"/><circle cx="913.1" cy="550.2" r="5.2" fill="#4682b4" stroke="#fff6f0" stroke-width="1.2"/><rect x="841.7" y="485.1" width="39.1" height="17.6" rx="8.8" fill="#fd6347" stroke="#fff6f0" stroke-width="1.3"/><circle cx="850.2" cy="494.2" r="5.2" fill="#4682b4" stroke="#fff6f0" stroke-width="1.2"/><circle cx="874.0" cy="494.2" r="3.3" fill="#4682b4" stroke="#fff6f0" stroke-width="1.2"/><rect x="882.0" y="485.1" width="40.2" height="17.6" rx="8.8" fill="#fd6347" stroke="#fff6f0" stroke-width="1.3"/><circle cx="891.6" cy="494.2" r="5.2" fill="#4682b4" stroke="#fff6f0" stroke-width="1.2"/><circle cx="915.4" cy="493.6" r="3.3" fill="#4682b4" stroke="#fff6f0" stroke-width="1.2"/><polygon points="798.7,533.2 804.4,533.2 804.4,565.3 792.5,565.3 792.5,550.0" fill="#fd6347" stroke="#fff6f0" stroke-width="1.3"/><rect x="784.5" y="546.7" width="7.5" height="30.3" rx="0" fill="#fd6347" stroke="#fff6f0" stroke-width="1.3"/><rect x="805.5" y="533.2" width="10.7" height="28.1" rx="0" fill="#fd6347" stroke="#fff6f0" stroke-width="1.3"/><rect x="817.4" y="533.2" width="11.3" height="28.1" rx="0" fill="#fd6347" stroke="#fff6f0" stroke-width="1.3"/><rect x="829.8" y="532.0" width="11.4" height="28.5" rx="0" fill="#fd6347" stroke="#fff6f0" stroke-width="1.3"/><rect x="842.3" y="532.0" width="10.7" height="28.5" rx="0" fill="#fd6347" stroke="#fff6f0" stroke-width="1.3"/><rect x="854.8" y="533.7" width="10.7" height="26.6" rx="0" fill="#fd6347" stroke="#fff6f0" stroke-width="1.3"/><rect x="867.2" y="533.7" width="10.8" height="27.6" rx="0" fill="#fd6347" stroke="#fff6f0" stroke-width="1.3"/><rect x="879.7" y="533.7" width="10.2" height="28.6" rx="0" fill="#fd6347" stroke="#fff6f0" stroke-width="1.3"/><polygon points="792.5,567.6 804.4,567.6 804.4,588.0 801.0,594.2 795.0,592.0" fill="#fd6347" stroke="#fff6f0" stroke-width="1.3"/><polygon points="797.0,571.5 803.2,571.5 802.5,579.5 799.0,579.0" fill="#4682b4" stroke="#fff6f0" stroke-width="1"/><circle cx="798.7" cy="589.6" r="2" fill="#4682b4" stroke="#fff6f0" stroke-width="1"/><rect x="806.6" y="563.6" width="11.4" height="24.9" rx="0" fill="#fd6347" stroke="#fff6f0" stroke-width="1.3"/><rect x="819.1" y="563.6" width="10.7" height="24.9" rx="0" fill="#fd6347" stroke="#fff6f0" stroke-width="1.3"/><rect x="805.0" y="589.6" width="24.8" height="10.8" rx="0" fill="#fd6347" stroke="#fff6f0" stroke-width="1.3"/><rect x="831.5" y="561.3" width="18.2" height="39.7" rx="9.1" fill="#fd6347" stroke="#fff6f0" stroke-width="1.3"/><circle cx="840.6" cy="568.1" r="3.3" fill="#4682b4" stroke="#fff6f0" stroke-width="1.2"/><circle cx="841.2" cy="592.5" r="5.2" fill="#4682b4" stroke="#fff6f0" stroke-width="1.2"/><rect x="850.8" y="561.3" width="19.2" height="39.7" rx="9.6" fill="#fd6347" stroke="#fff6f0" stroke-width="1.3"/><circle cx="860.4" cy="570.4" r="5.2" fill="#4682b4" stroke="#fff6f0" stroke-width="1.2"/><circle cx="860.4" cy="594.2" r="3.3" fill="#4682b4" stroke="#fff6f0" stroke-width="1.2"/><rect x="871.2" y="563.6" width="18.7" height="39.1" rx="9.3" fill="#fd6347" stroke="#fff6f0" stroke-width="1.3"/><circle cx="880.2" cy="570.4" r="3.3" fill="#4682b4" stroke="#fff6f0" stroke-width="1.2"/><circle cx="880.8" cy="594.7" r="5.2" fill="#4682b4" stroke="#fff6f0" stroke-width="1.2"/><rect x="891.6" y="573.2" width="10.2" height="27.2" rx="0" fill="#fd6347" stroke="#fff6f0" stroke-width="1.3"/><rect x="904.0" y="561.3" width="18.2" height="39.7" rx="9.1" fill="#fd6347" stroke="#fff6f0" stroke-width="1.3"/><circle cx="913.1" cy="570.4" r="5.2" fill="#4682b4" stroke="#fff6f0" stroke-width="1.2"/><circle cx="913.1" cy="594.2" r="3.3" fill="#4682b4" stroke="#fff6f0" stroke-width="1.2"/><rect x="798.1" y="603.2" width="40.2" height="17.6" rx="8.8" fill="#fd6347" stroke="#fff6f0" stroke-width="1.3"/><circle cx="807.2" cy="611.7" r="5.2" fill="#4682b4" stroke="#fff6f0" stroke-width="1.2"/><circle cx="831.5" cy="611.7" r="3.3" fill="#4682b4" stroke="#fff6f0" stroke-width="1.2"/><rect x="839.5" y="603.2" width="40.2" height="17.6" rx="8.8" fill="#fd6347" stroke="#fff6f0" stroke-width="1.3"/><circle cx="846.3" cy="611.7" r="3.3" fill="#4682b4" stroke="#fff6f0" stroke-width="1.2"/><circle cx="870.6" cy="611.7" r="5.2" fill="#4682b4" stroke="#fff6f0" stroke-width="1.2"/><rect x="882.0" y="603.2" width="40.2" height="17.6" rx="8.8" fill="#fd6347" stroke="#fff6f0" stroke-width="1.3"/><circle cx="891.0" cy="611.7" r="5.2" fill="#4682b4" stroke="#fff6f0" stroke-width="1.2"/><circle cx="915.4" cy="611.7" r="3.3" fill="#4682b4" stroke="#fff6f0" stroke-width="1.2"/><rect x="938.75" y="483.75" width="276.5" height="138.5" fill="#4682b4" stroke="#fff6f0" stroke-width="1.5"/><path d="M939.5 491 L957.5 490 Q965.5 493 965.5 497 Q963.5 502 957.5 501 L939.5 501 Z" fill="#fd6347" stroke="#fff6f0" stroke-width="1.3"/><polygon points="943.5,493.0 951.5,493.0 948.5,497.0 943.5,498.0" fill="#4682b4" stroke="#fff6f0" stroke-width="0.8"/><circle cx="960.0" cy="496.0" r="2.2" fill="#4682b4" stroke="#fff6f0" stroke-width="0.9"/><path d="M965.5 503.5 L947.5 502.5 Q939.5 505.5 939.5 509.5 Q941.5 514.5 947.5 513.5 L965.5 513.5 Z" fill="#fd6347" stroke="#fff6f0" stroke-width="1.3"/><polygon points="961.5,505.5 953.5,507.5 954.5,511.5 961.5,511.5" fill="#4682b4" stroke="#fff6f0" stroke-width="0.8"/><circle cx="945.0" cy="508.5" r="2.2" fill="#4682b4" stroke="#fff6f0" stroke-width="0.9"/><path d="M939.5 517 L957.5 516 Q965.5 519 965.5 523 Q963.5 528 957.5 527 L939.5 527 Z" fill="#fd6347" stroke="#fff6f0" stroke-width="1.3"/><polygon points="943.5,519.0 951.5,519.0 948.5,523.0 943.5,524.0" fill="#4682b4" stroke="#fff6f0" stroke-width="0.8"/><circle cx="960.0" cy="522.0" r="2.2" fill="#4682b4" stroke="#fff6f0" stroke-width="0.9"/><path d="M965.5 529.5 L947.5 528.5 Q939.5 531.5 939.5 535.5 Q941.5 540.5 947.5 539.5 L965.5 539.5 Z" fill="#fd6347" stroke="#fff6f0" stroke-width="1.3"/><polygon points="961.5,531.5 953.5,533.5 954.5,537.5 961.5,537.5" fill="#4682b4" stroke="#fff6f0" stroke-width="0.8"/><circle cx="945.0" cy="534.5" r="2.2" fill="#4682b4" stroke="#fff6f0" stroke-width="0.9"/><path d="M939.5 543 L957.5 542 Q965.5 545 965.5 549 Q963.5 554 957.5 553 L939.5 553 Z" fill="#fd6347" stroke="#fff6f0" stroke-width="1.3"/><polygon points="943.5,545.0 951.5,545.0 948.5,549.0 943.5,550.0" fill="#4682b4" stroke="#fff6f0" stroke-width="0.8"/><circle cx="960.0" cy="548.0" r="2.2" fill="#4682b4" stroke="#fff6f0" stroke-width="0.9"/><path d="M965.5 555.5 L947.5 554.5 Q939.5 557.5 939.5 561.5 Q941.5 566.5 947.5 565.5 L965.5 565.5 Z" fill="#fd6347" stroke="#fff6f0" stroke-width="1.3"/><polygon points="961.5,557.5 953.5,559.5 954.5,563.5 961.5,563.5" fill="#4682b4" stroke="#fff6f0" stroke-width="0.8"/><circle cx="945.0" cy="560.5" r="2.2" fill="#4682b4" stroke="#fff6f0" stroke-width="0.9"/><path d="M939.5 569 L957.5 568 Q965.5 571 965.5 575 Q963.5 580 957.5 579 L939.5 579 Z" fill="#fd6347" stroke="#fff6f0" stroke-width="1.3"/><polygon points="943.5,571.0 951.5,571.0 948.5,575.0 943.5,576.0" fill="#4682b4" stroke="#fff6f0" stroke-width="0.8"/><circle cx="960.0" cy="574.0" r="2.2" fill="#4682b4" stroke="#fff6f0" stroke-width="0.9"/><path d="M965.5 581.5 L947.5 580.5 Q939.5 583.5 939.5 587.5 Q941.5 592.5 947.5 591.5 L965.5 591.5 Z" fill="#fd6347" stroke="#fff6f0" stroke-width="1.3"/><polygon points="961.5,583.5 953.5,585.5 954.5,589.5 961.5,589.5" fill="#4682b4" stroke="#fff6f0" stroke-width="0.8"/><circle cx="945.0" cy="586.5" r="2.2" fill="#4682b4" stroke="#fff6f0" stroke-width="0.9"/><path d="M939.5 595 L957.5 594 Q965.5 597 965.5 601 Q963.5 606 957.5 605 L939.5 605 Z" fill="#fd6347" stroke="#fff6f0" stroke-width="1.3"/><polygon points="943.5,597.0 951.5,597.0 948.5,601.0 943.5,602.0" fill="#4682b4" stroke="#fff6f0" stroke-width="0.8"/><circle cx="960.0" cy="600.0" r="2.2" fill="#4682b4" stroke="#fff6f0" stroke-width="0.9"/><path d="M965.5 607.5 L947.5 606.5 Q939.5 609.5 939.5 613.5 Q941.5 618.5 947.5 617.5 L965.5 617.5 Z" fill="#fd6347" stroke="#fff6f0" stroke-width="1.3"/><polygon points="961.5,609.5 953.5,611.5 954.5,615.5 961.5,615.5" fill="#4682b4" stroke="#fff6f0" stroke-width="0.8"/><circle cx="945.0" cy="612.5" r="2.2" fill="#4682b4" stroke="#fff6f0" stroke-width="0.9"/><rect x="966.6" y="484.5" width="11.8" height="13.5" rx="0" fill="#fd6347" stroke="#fff6f0" stroke-width="1.3"/><circle cx="972.5" cy="491.2" r="1.8" fill="#4682b4" stroke="#fff6f0" stroke-width="1"/><rect x="979.6" y="484.5" width="11.8" height="13.5" rx="0" fill="#fd6347" stroke="#fff6f0" stroke-width="1.3"/><circle cx="985.5" cy="491.2" r="1.8" fill="#4682b4" stroke="#fff6f0" stroke-width="1"/><rect x="966.6" y="498.5" width="11.8" height="13.0" rx="0" fill="#fd6347" stroke="#fff6f0" stroke-width="1.3"/><circle cx="972.5" cy="505.0" r="1.8" fill="#4682b4" stroke="#fff6f0" stroke-width="1"/><rect x="979.6" y="498.5" width="11.8" height="13.0" rx="0" fill="#fd6347" stroke="#fff6f0" stroke-width="1.3"/><circle cx="985.5" cy="505.0" r="1.8" fill="#4682b4" stroke="#fff6f0" stroke-width="1"/><rect x="966.6" y="512.5" width="11.8" height="13.0" rx="0" fill="#fd6347" stroke="#fff6f0" stroke-width="1.3"/><circle cx="972.5" cy="519.0" r="1.8" fill="#4682b4" stroke="#fff6f0" stroke-width="1"/><rect x="979.6" y="512.5" width="11.8" height="13.0" rx="0" fill="#fd6347" stroke="#fff6f0" stroke-width="1.3"/><circle cx="985.5" cy="519.0" r="1.8" fill="#4682b4" stroke="#fff6f0" stroke-width="1"/><rect x="966.6" y="525.8" width="11.8" height="12.8" rx="0" fill="#fd6347" stroke="#fff6f0" stroke-width="1.3"/><circle cx="972.5" cy="532.2" r="1.8" fill="#4682b4" stroke="#fff6f0" stroke-width="1"/><rect x="979.6" y="525.8" width="11.8" height="12.8" rx="0" fill="#fd6347" stroke="#fff6f0" stroke-width="1.3"/><circle cx="985.5" cy="532.2" r="1.8" fill="#4682b4" stroke="#fff6f0" stroke-width="1"/><rect x="966.6" y="538.8" width="11.8" height="12.8" rx="0" fill="#fd6347" stroke="#fff6f0" stroke-width="1.3"/><circle cx="972.5" cy="545.2" r="1.8" fill="#4682b4" stroke="#fff6f0" stroke-width="1"/><rect x="979.6" y="538.8" width="11.8" height="12.8" rx="0" fill="#fd6347" stroke="#fff6f0" stroke-width="1.3"/><circle cx="985.5" cy="545.2" r="1.8" fill="#4682b4" stroke="#fff6f0" stroke-width="1"/><rect x="992.5" y="486.5" width="13.0" height="13.0" rx="0" fill="#fd6347" stroke="#fff6f0" stroke-width="1.3"/><circle cx="999.0" cy="493.0" r="2" fill="#4682b4" stroke="#fff6f0" stroke-width="1"/><path d="M993 504.0 Q993 500.0 997 500.0 L1015 501.0 L1014 506.0 L997 509.0 Q993 508.0 993 504.0 Z" fill="#fd6347" stroke="#fff6f0" stroke-width="1.3"/><circle cx="997.0" cy="504.5" r="2" fill="#4682b4" stroke="#fff6f0" stroke-width="0.9"/><path d="M1015 513.0 Q1015 509.0 1011 509.0 L993 510.0 L994 516.0 L1011 517.5 Q1015 517.0 1015 513.0 Z" fill="#fd6347" stroke="#fff6f0" stroke-width="1.3"/><circle cx="1010.5" cy="513.0" r="2" fill="#4682b4" stroke="#fff6f0" stroke-width="0.9"/><path d="M993 521.5 Q993 517.5 997 517.5 L1015 518.5 L1014 523.5 L997 526.5 Q993 525.5 993 521.5 Z" fill="#fd6347" stroke="#fff6f0" stroke-width="1.3"/><circle cx="997.0" cy="522.0" r="2" fill="#4682b4" stroke="#fff6f0" stroke-width="0.9"/><path d="M1015 530.5 Q1015 526.5 1011 526.5 L993 527.5 L994 533.5 L1011 535.0 Q1015 534.5 1015 530.5 Z" fill="#fd6347" stroke="#fff6f0" stroke-width="1.3"/><circle cx="1010.5" cy="530.5" r="2" fill="#4682b4" stroke="#fff6f0" stroke-width="0.9"/><path d="M993 539.0 Q993 535.0 997 535.0 L1015 536.0 L1014 541.0 L997 544.0 Q993 543.0 993 539.0 Z" fill="#fd6347" stroke="#fff6f0" stroke-width="1.3"/><circle cx="997.0" cy="539.5" r="2" fill="#4682b4" stroke="#fff6f0" stroke-width="0.9"/><path d="M1015 548.0 Q1015 544.0 1011 544.0 L993 545.0 L994 551.0 L1011 552.5 Q1015 552.0 1015 548.0 Z" fill="#fd6347" stroke="#fff6f0" stroke-width="1.3"/><circle cx="1010.5" cy="548.0" r="2" fill="#4682b4" stroke="#fff6f0" stroke-width="0.9"/><path d="M966.6 553.5 L973.6 553.5 L975.6 573.5 L968.6 573.5 Z" fill="#fd6347" stroke="#fff6f0" stroke-width="1.3"/><circle cx="972.1" cy="570.0" r="1.8" fill="#4682b4" stroke="#fff6f0" stroke-width="0.9"/><path d="M978.3000000000001 553.5 L985.3000000000001 553.5 L983.3000000000001 573.5 L976.3000000000001 573.5 Z" fill="#fd6347" stroke="#fff6f0" stroke-width="1.3"/><circle cx="980.3" cy="557.0" r="1.8" fill="#4682b4" stroke="#fff6f0" stroke-width="0.9"/><path d="M986.0 553.5 L993.0 553.5 L995.0 573.5 L988.0 573.5 Z" fill="#fd6347" stroke="#fff6f0" stroke-width="1.3"/><circle cx="991.5" cy="570.0" r="1.8" fill="#4682b4" stroke="#fff6f0" stroke-width="0.9"/><path d="M997.7 553.5 L1004.7 553.5 L1002.7 573.5 L995.7 573.5 Z" fill="#fd6347" stroke="#fff6f0" stroke-width="1.3"/><circle cx="999.7" cy="557.0" r="1.8" fill="#4682b4" stroke="#fff6f0" stroke-width="0.9"/><path d="M1005.4 553.5 L1012.4 553.5 L1014.4 573.5 L1007.4 573.5 Z" fill="#fd6347" stroke="#fff6f0" stroke-width="1.3"/><circle cx="1010.9" cy="570.0" r="1.8" fill="#4682b4" stroke="#fff6f0" stroke-width="0.9"/><rect x="966.6" y="575.0" width="11.8" height="15.4" rx="0" fill="#fd6347" stroke="#fff6f0" stroke-width="1.3"/><rect x="979.6" y="575.0" width="11.0" height="15.4" rx="0" fill="#fd6347" stroke="#fff6f0" stroke-width="1.3"/><rect x="991.4" y="575.0" width="11.8" height="15.4" rx="0" fill="#fd6347" stroke="#fff6f0" stroke-width="1.3"/><rect x="1004.0" y="575.0" width="11.0" height="15.4" rx="0" fill="#fd6347" stroke="#fff6f0" stroke-width="1.3"/><rect x="966.6" y="590.4" width="11.8" height="15.3" rx="0" fill="#fd6347" stroke="#fff6f0" stroke-width="1.3"/><rect x="979.6" y="590.4" width="11.0" height="15.3" rx="0" fill="#fd6347" stroke="#fff6f0" stroke-width="1.3"/><rect x="991.4" y="590.4" width="11.8" height="15.3" rx="0" fill="#fd6347" stroke="#fff6f0" stroke-width="1.3"/><rect x="1004.0" y="590.4" width="11.0" height="15.3" rx="0" fill="#fd6347" stroke="#fff6f0" stroke-width="1.3"/><rect x="966.6" y="605.7" width="11.8" height="15.8" rx="0" fill="#fd6347" stroke="#fff6f0" stroke-width="1.3"/><rect x="979.6" y="605.7" width="11.0" height="15.8" rx="0" fill="#fd6347" stroke="#fff6f0" stroke-width="1.3"/><rect x="991.4" y="605.7" width="11.8" height="15.8" rx="0" fill="#fd6347" stroke="#fff6f0" stroke-width="1.3"/><rect x="1004.0" y="605.7" width="11.0" height="15.8" rx="0" fill="#fd6347" stroke="#fff6f0" stroke-width="1.3"/></svg>
</body></html>
